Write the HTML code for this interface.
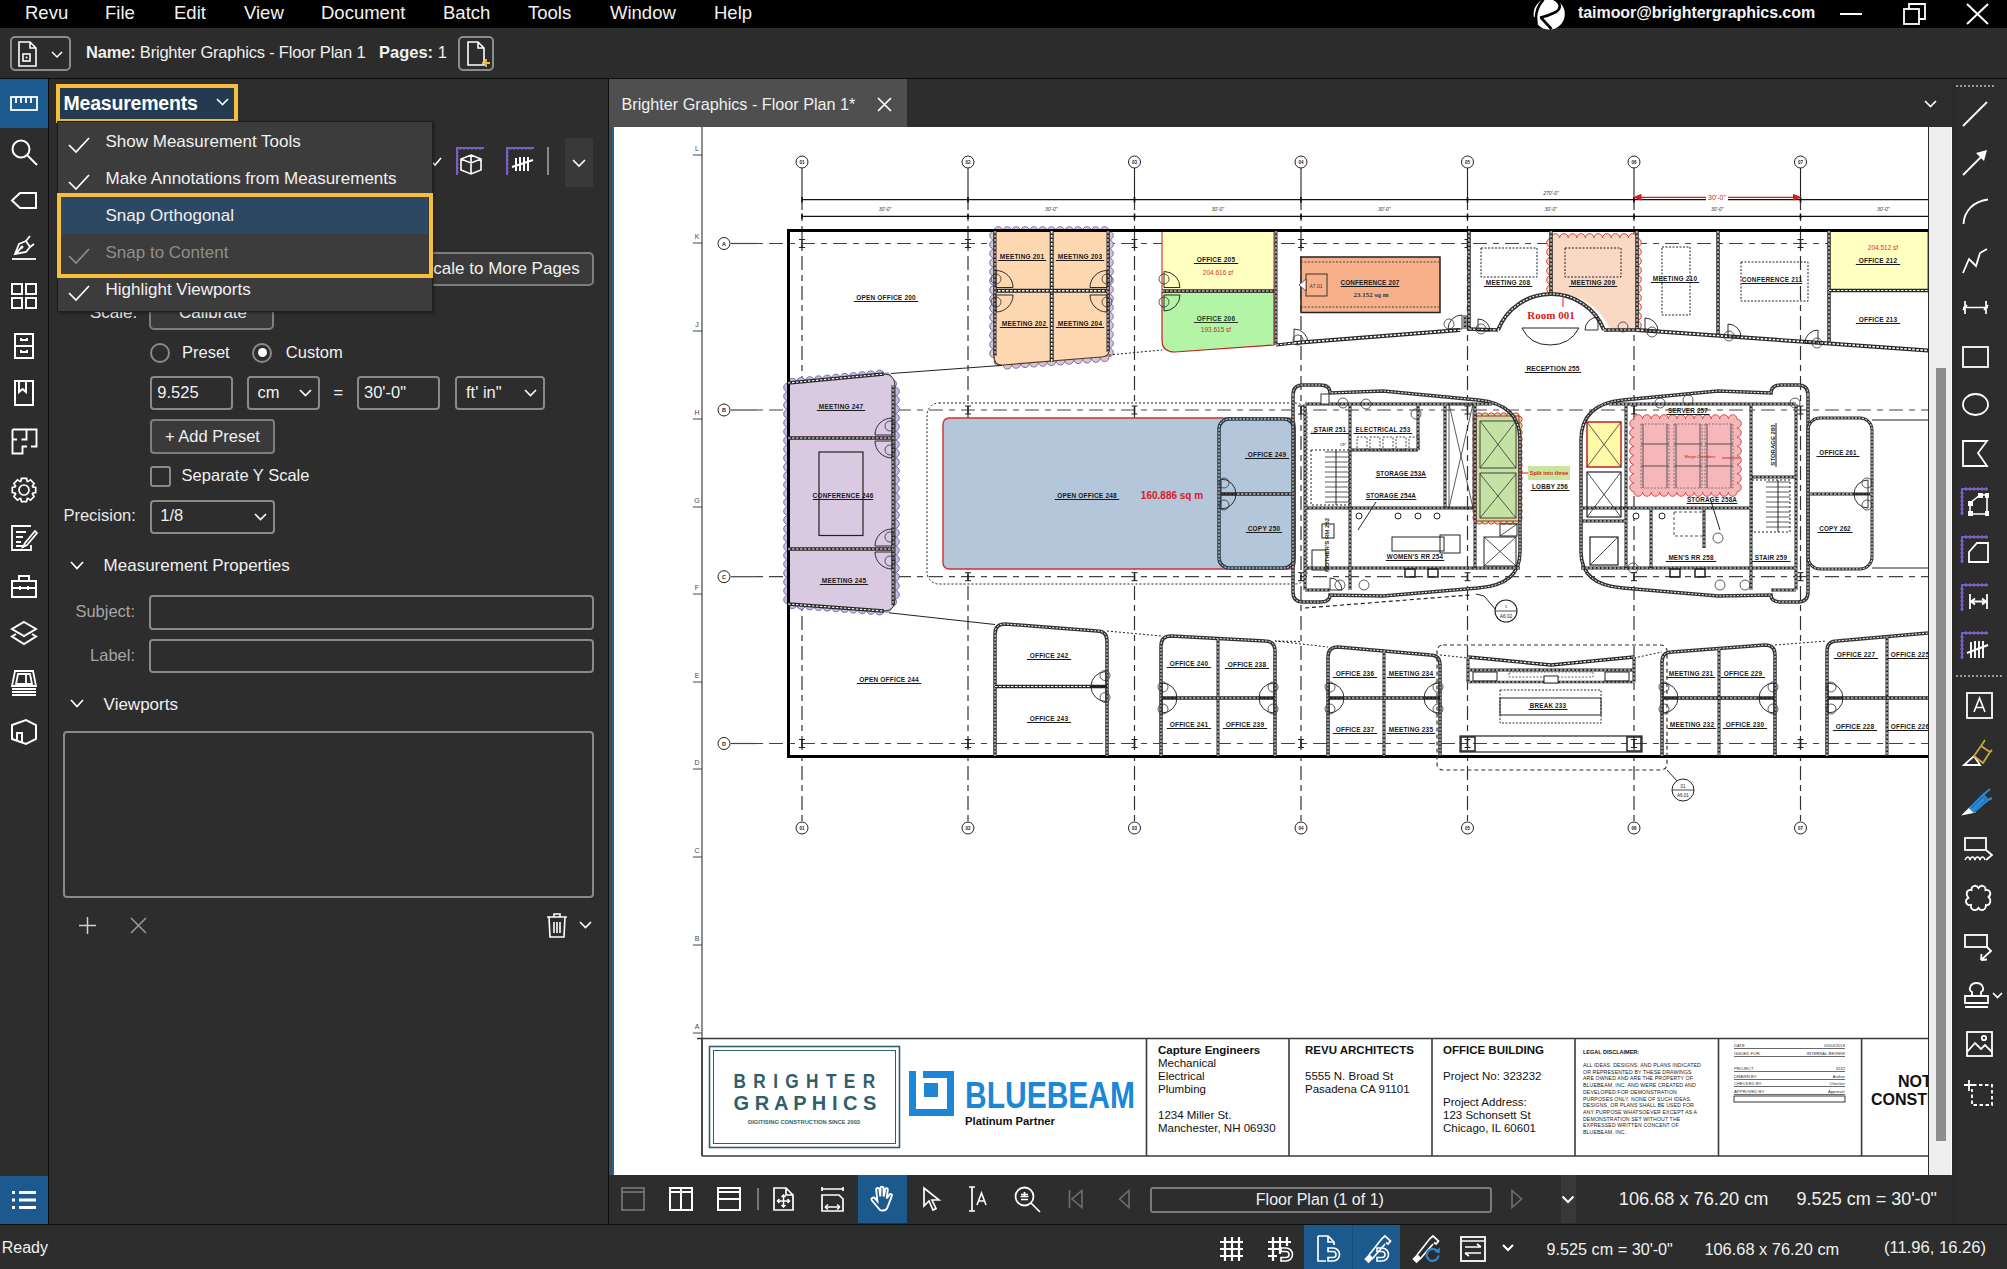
<!DOCTYPE html>
<html><head><meta charset="utf-8">
<style>
*{margin:0;padding:0;box-sizing:border-box}
html,body{width:2007px;height:1269px;overflow:hidden;background:#2d2d2d;font-family:"Liberation Sans",sans-serif;color:#fff}
.a{position:absolute}
#menubar{left:0;top:0;width:2007px;height:28px;background:#000}
.mi{position:absolute;top:4.3px;font-size:18.5px;line-height:1;color:#f2f2f2;white-space:nowrap}
#toolbar{left:0;top:28px;width:2007px;height:50px;background:#2c2c2c}
.hl{position:absolute;background:#0d0d0d}
#lsb{left:0;top:79px;width:48px;height:1145px;background:#2d2d2d}
#panel{left:49px;top:79px;width:559px;height:1145px;background:#2d2d2d}
#doc{left:609px;top:79px;width:1343px;height:1145px;background:#2d2d2d}
#rsb{left:1952px;top:79px;width:55px;height:1145px;background:#2d2d2d}
#status{left:0;top:1225px;width:2007px;height:44px;background:#2d2d2d}
.txt{position:absolute;white-space:nowrap;line-height:1}
.box{position:absolute;border:2px solid #8a8a8a;border-radius:4px}
svg{position:absolute;overflow:visible}
</style></head><body>
<div id="menubar" class="a">
 <span class="mi" style="left:25px">Revu</span>
 <span class="mi" style="left:105px">File</span>
 <span class="mi" style="left:174px">Edit</span>
 <span class="mi" style="left:244px">View</span>
 <span class="mi" style="left:321px">Document</span>
 <span class="mi" style="left:443px">Batch</span>
 <span class="mi" style="left:528px">Tools</span>
 <span class="mi" style="left:610px">Window</span>
 <span class="mi" style="left:714px">Help</span>
</div>
<div id="toolbar" class="a">
 <div class="box" style="left:10px;top:8px;width:61px;height:35px;border-color:#8c8c8c;border-radius:5px"></div>
 <svg style="left:17px;top:12px" width="24" height="28" viewBox="0 0 24 28" fill="none" stroke="#fff" stroke-width="1.6"><path d="M2 2H13L19 8V26H2Z M13 2V8H19"/><rect x="6" y="14" width="7" height="7"/><rect x="8.6" y="16.6" width="1.8" height="1.8" fill="#fff" stroke="none"/></svg>
 <svg style="left:51px;top:23px" width="12" height="7" viewBox="0 0 12 7" fill="none" stroke="#fff" stroke-width="1.5"><path d="M1 1L6 6L11 1"/></svg>
 <span class="txt" style="left:86px;top:16px;font-size:16.5px;color:#f0f0f0;letter-spacing:-0.2px"><b>Name:</b> Brighter Graphics - Floor Plan 1</span>
 <span class="txt" style="left:379px;top:16px;font-size:16.5px;color:#f0f0f0"><b>Pages:</b> 1</span>
 <div class="box" style="left:458px;top:8px;width:36px;height:35px;border-color:#8c8c8c;border-radius:5px"></div>
 <svg style="left:466px;top:12px" width="24" height="28" viewBox="0 0 24 28" fill="none" stroke="#fff" stroke-width="1.6"><path d="M2 2H12L18 8V25H2Z M12 2V8H18"/><path d="M20 19V27M16 23H24" stroke="#e8c040" stroke-width="1.8"/></svg>
</div>
<div class="hl" style="left:0;top:78px;width:2007px;height:1px"></div>
<div id="lsb" class="a">
 <div class="a" style="left:0;top:0;width:48px;height:49px;background:#1c5a8d"></div>
 <svg style="left:10px;top:17px" width="28" height="15" viewBox="0 0 28 15" fill="none" stroke="#fff" stroke-width="1.8"><rect x="1" y="1" width="26" height="13"/><path d="M6 1V7M11 1V7M16 1V7M21 1V7"/></svg>
 <svg style="left:11px;top:60px" width="27" height="27" viewBox="0 0 27 27" fill="none" stroke="#fff" stroke-width="2"><circle cx="10" cy="10" r="8.5"/><path d="M16 16L26 26"/></svg>
 <svg style="left:11px;top:113px" width="26" height="17" viewBox="0 0 26 17" fill="none" stroke="#fff" stroke-width="2"><path d="M25 1H9L1 8.5L9 16H25Z"/></svg>
 <svg style="left:11px;top:156px" width="26" height="26" viewBox="0 0 26 26" fill="none" stroke="#fff" stroke-width="1.8"><path d="M1 24H25"/><path d="M4 19L8 9L15 6L19 12L15 17Z M4 19L11 12"/><path d="M15 6L19 1M19 12L23 9"/><circle cx="11" cy="12" r="0.6" fill="#fff"/></svg>
 <svg style="left:11px;top:204px" width="26" height="26" viewBox="0 0 26 26" fill="none" stroke="#fff" stroke-width="2"><rect x="1" y="1" width="10" height="10"/><rect x="15" y="1" width="10" height="10"/><rect x="1" y="15" width="10" height="10"/><rect x="15" y="15" width="10" height="10"/></svg>
 <svg style="left:14px;top:254px" width="20" height="26" viewBox="0 0 20 26" fill="none" stroke="#fff" stroke-width="2"><rect x="1" y="1" width="18" height="24"/><path d="M1 13H19M7 5V7H13V5M7 17V19H13V17"/></svg>
 <svg style="left:14px;top:301px" width="20" height="26" viewBox="0 0 20 26" fill="none" stroke="#fff" stroke-width="2"><rect x="1" y="1" width="18" height="24"/><path d="M5 1V12L8.5 9L12 12V1"/></svg>
 <svg style="left:11px;top:349px" width="27" height="27" viewBox="0 0 27 27" fill="none" stroke="#fff" stroke-width="1.9"><path d="M1.5 1.5H25.5V18.5H20 M1.5 1.5V25.5H11.5V18.5H16 M15.5 1.5V11.5H10.5 M1.5 11.5H6"/></svg>
 <svg style="left:11px;top:398px" width="26" height="26" viewBox="0 0 26 26" fill="none" stroke="#fff" stroke-width="1.7"><path d="M21.7 9.8 L24.7 10.5 L24.7 15.5 L21.7 16.2 L21.4 16.9 L23.1 19.5 L19.5 23.1 L16.9 21.4 L16.2 21.7 L15.5 24.7 L10.5 24.7 L9.8 21.7 L9.1 21.4 L6.5 23.1 L2.9 19.5 L4.6 16.9 L4.3 16.2 L1.3 15.5 L1.3 10.5 L4.3 9.8 L4.6 9.1 L2.9 6.5 L6.5 2.9 L9.1 4.6 L9.8 4.3 L10.5 1.3 L15.5 1.3 L16.2 4.3 L16.9 4.6 L19.5 2.9 L23.1 6.5 L21.4 9.1Z"/><circle cx="13" cy="13" r="5"/></svg>
 <svg style="left:11px;top:446px" width="26" height="26" viewBox="0 0 26 26" fill="none" stroke="#fff" stroke-width="1.8"><path d="M20 1H1V25H20V20"/><path d="M5 7H15M5 12H12M5 17H10M5 21H14"/><path d="M24 6L14 18L12 22L16 20L26 8Z"/></svg>
 <svg style="left:11px;top:495px" width="26" height="24" viewBox="0 0 26 24" fill="none" stroke="#fff" stroke-width="2"><rect x="1" y="7" width="24" height="16"/><path d="M8 7V2H18V7M1 14H25M9 12V16M17 12V16"/></svg>
 <svg style="left:11px;top:542px" width="26" height="26" viewBox="0 0 26 26" fill="none" stroke="#fff" stroke-width="2"><path d="M13 1L25 8L13 15L1 8Z"/><path d="M5 13L1 15.5L13 23L25 15.5L21 13"/></svg>
 <svg style="left:11px;top:591px" width="26" height="26" viewBox="0 0 26 26" fill="none" stroke="#fff" stroke-width="1.8"><path d="M4 1H22L25 16H1Z M7 4H19L21 14H5Z M15 4V14"/><path d="M1 19H25M1 22H25M1 25H25"/></svg>
 <svg style="left:11px;top:640px" width="26" height="26" viewBox="0 0 26 26" fill="none" stroke="#fff" stroke-width="2"><path d="M1 6L15 1L25 6V20L15 25L1 20Z"/><path d="M6 21V14H11V23"/></svg>
 <div class="a" style="left:0;top:1097px;width:48px;height:48px;background:#1c5a8d"></div>
 <svg style="left:12px;top:1112px" width="24" height="18" viewBox="0 0 24 18" fill="#fff"><rect x="0" y="0" width="3" height="3"/><rect x="0" y="7.5" width="3" height="3"/><rect x="0" y="15" width="3" height="3"/><rect x="7" y="0" width="17" height="3"/><rect x="7" y="7.5" width="17" height="3"/><rect x="7" y="15" width="17" height="3"/></svg>
</div>
<div class="hl" style="left:48px;top:79px;width:1px;height:1145px"></div>
<div id="panel" class="a"></div>
<!-- panel content (page coords) -->
<div id="pc">
 <!-- hidden toolbar row behind menu -->
 <svg style="left:432px;top:156px" width="10" height="10" viewBox="0 0 10 10" fill="none" stroke="#fff" stroke-width="1.6"><path d="M0 6L3 9L9 2"/></svg>
 <svg style="left:455px;top:146px" width="30" height="30" viewBox="0 0 30 30" fill="none"><path d="M2 29V2H29" stroke="#7b5fc4" stroke-width="2"/><path d="M5 1V4M9 1V4M13 1V4M17 1V4M21 1V4M25 1V4M1 6H4M1 10H4M1 14H4M1 18H4M1 22H4M1 26H4" stroke="#7b5fc4" stroke-width="1.2"/><path d="M16 9L26 13V24L16 28L6 24V13Z M6 13L16 17L26 13 M16 17V28 M16 9V17" stroke="#fff" stroke-width="1.6"/></svg>
 <svg style="left:505px;top:146px" width="30" height="30" viewBox="0 0 30 30" fill="none"><path d="M2 29V2H29" stroke="#7b5fc4" stroke-width="2"/><path d="M5 1V4M9 1V4M13 1V4M17 1V4M21 1V4M25 1V4M1 6H4M1 10H4M1 14H4M1 18H4M1 22H4M1 26H4" stroke="#7b5fc4" stroke-width="1.2"/><path d="M11 12V25M15 11V25M19 11V25M23 11V25M7 21L28 14" stroke="#fff" stroke-width="2"/></svg>
 <div class="a" style="left:547px;top:147px;width:2px;height:28px;background:#8a8a8a"></div>
 <div class="a" style="left:565px;top:138px;width:28px;height:49px;background:#393939"></div>
 <svg style="left:572px;top:159px" width="14" height="8" viewBox="0 0 14 8" fill="none" stroke="#fff" stroke-width="1.6"><path d="M1 1L7 7L13 1"/></svg>
 <div class="box" style="left:300px;top:252px;width:294px;height:34px;background:#3a3a3a;border-color:#7e7e7e;border-radius:5px"></div>
 <span class="txt" style="left:422px;top:259.6px;font-size:17px;color:#f0f0f0">Scale to More Pages</span>
 <span class="txt" style="left:90px;top:304.2px;font-size:17px;color:#e8e8e8">Scale:</span>
 <div class="box" style="left:149px;top:290px;width:125px;height:40px;background:#3a3a3a;border-color:#7e7e7e;border-radius:5px"></div>
 <span class="txt" style="left:179px;top:304.2px;font-size:17px;color:#f0f0f0">Calibrate</span>
 <!-- radios -->
 <div class="a" style="left:149.5px;top:342.8px;width:20px;height:20px;border:2px solid #8a8a8a;border-radius:50%"></div>
 <span class="txt" style="left:182px;top:344px;font-size:16.5px;color:#f0f0f0">Preset</span>
 <div class="a" style="left:252.3px;top:342.8px;width:20px;height:20px;border:2px solid #8a8a8a;border-radius:50%"></div>
 <div class="a" style="left:257.8px;top:348.3px;width:9px;height:9px;background:#fff;border-radius:50%"></div>
 <span class="txt" style="left:285.8px;top:344px;font-size:16.5px;color:#f0f0f0">Custom</span>
 <!-- inputs -->
 <div class="box" style="left:149.5px;top:376px;width:83px;height:34px"></div>
 <span class="txt" style="left:157.3px;top:384px;font-size:16.5px;color:#f0f0f0">9.525</span>
 <div class="box" style="left:246.6px;top:376px;width:73px;height:34px"></div>
 <span class="txt" style="left:257.6px;top:384px;font-size:16.5px;color:#f0f0f0">cm</span>
 <svg style="left:299px;top:389px" width="13" height="8" viewBox="0 0 13 8" fill="none" stroke="#fff" stroke-width="1.6"><path d="M1 1L6.5 6.5L12 1"/></svg>
 <span class="txt" style="left:333.6px;top:384px;font-size:16.5px;color:#f0f0f0">=</span>
 <div class="box" style="left:357px;top:376px;width:83px;height:34px"></div>
 <span class="txt" style="left:364px;top:384px;font-size:16.5px;color:#f0f0f0">30'-0"</span>
 <div class="box" style="left:455px;top:376px;width:90px;height:34px"></div>
 <span class="txt" style="left:466px;top:384px;font-size:16.5px;color:#f0f0f0">ft' in"</span>
 <svg style="left:524px;top:389px" width="13" height="8" viewBox="0 0 13 8" fill="none" stroke="#fff" stroke-width="1.6"><path d="M1 1L6.5 6.5L12 1"/></svg>
 <div class="box" style="left:149.5px;top:419px;width:125px;height:35px;background:#3a3a3a;border-color:#7e7e7e"></div>
 <span class="txt" style="left:165px;top:427.7px;font-size:16.5px;color:#f0f0f0">+ Add Preset</span>
 <div class="a" style="left:149.5px;top:466.3px;width:21px;height:21px;border:2px solid #8a8a8a;border-radius:3px"></div>
 <span class="txt" style="left:181.6px;top:467px;font-size:16.5px;color:#f0f0f0">Separate Y Scale</span>
 <span class="txt" style="left:63.4px;top:507.4px;font-size:16.5px;color:#e8e8e8">Precision:</span>
 <div class="box" style="left:149.5px;top:500px;width:125px;height:34px"></div>
 <span class="txt" style="left:160.3px;top:507.4px;font-size:16.5px;color:#f0f0f0">1/8</span>
 <svg style="left:254px;top:513px" width="13" height="8" viewBox="0 0 13 8" fill="none" stroke="#fff" stroke-width="1.6"><path d="M1 1L6.5 6.5L12 1"/></svg>
 <svg style="left:70px;top:561px" width="14" height="9" viewBox="0 0 14 9" fill="none" stroke="#fff" stroke-width="1.7"><path d="M1 1L7 7.5L13 1"/></svg>
 <span class="txt" style="left:103.6px;top:557.1px;font-size:17px;color:#f0f0f0">Measurement Properties</span>
 <span class="txt" style="left:75px;top:603px;font-size:16.5px;color:#a5a5a5;width:60px;text-align:right">Subject:</span>
 <div class="box" style="left:149.3px;top:595px;width:445px;height:35px"></div>
 <span class="txt" style="left:75px;top:646.5px;font-size:16.5px;color:#a5a5a5;width:60px;text-align:right">Label:</span>
 <div class="box" style="left:149.3px;top:638.5px;width:445px;height:34px"></div>
 <svg style="left:70px;top:699px" width="14" height="9" viewBox="0 0 14 9" fill="none" stroke="#fff" stroke-width="1.7"><path d="M1 1L7 7.5L13 1"/></svg>
 <span class="txt" style="left:103.6px;top:695.6px;font-size:17px;color:#f0f0f0">Viewports</span>
 <div class="box" style="left:63.4px;top:730.6px;width:531px;height:167px"></div>
 <svg style="left:79px;top:917px" width="17" height="17" viewBox="0 0 17 17" fill="none" stroke="#d0d0d0" stroke-width="1.5"><path d="M8.5 0V17M0 8.5H17"/></svg>
 <svg style="left:130px;top:917px" width="17" height="17" viewBox="0 0 17 17" fill="none" stroke="#9a9a9a" stroke-width="1.5"><path d="M1 1L16 16M16 1L1 16"/></svg>
 <svg style="left:546px;top:912px" width="22" height="26" viewBox="0 0 22 26" fill="none" stroke="#fff" stroke-width="1.6"><path d="M1 5H21M8 5V2H14V5M3 5L4 25H18L19 5M8 10V21M11 10V21M14 10V21"/></svg>
 <svg style="left:579px;top:921px" width="13" height="8" viewBox="0 0 13 8" fill="none" stroke="#fff" stroke-width="1.6"><path d="M1 1L6.5 6.5L12 1"/></svg>
</div>
<!-- measurements header + dropdown menu -->
<div class="a" style="left:56px;top:84px;width:182px;height:39px;border:4px solid #f5bf3c;background:#243a50"></div>
<span class="txt" style="left:63.5px;top:93.5px;font-size:19.5px;font-weight:bold;color:#fff;letter-spacing:-0.2px">Measurements</span>
<svg style="left:216px;top:98px" width="13" height="8" viewBox="0 0 13 8" fill="none" stroke="#fff" stroke-width="1.6"><path d="M1 1L6.5 6.5L12 1"/></svg>
<div class="a" style="left:57px;top:121px;width:376px;height:191px;background:#3c3c3c;border:1px solid #1e1e1e;box-shadow:1px 1px 3px rgba(0,0,0,.4)"></div>
<div class="a" style="left:61px;top:197px;width:367px;height:37px;background:#2d4862"></div>
<div class="a" style="left:57px;top:193px;width:376px;height:85px;border:4px solid #f5bf3c"></div>
<svg style="left:68px;top:137px" width="22" height="16" viewBox="0 0 22 16" fill="none" stroke="#fff" stroke-width="1.7"><path d="M1 8L8 15L21 1"/></svg>
<span class="txt" style="left:105.5px;top:132.8px;font-size:17px;color:#f0f0f0">Show Measurement Tools</span>
<svg style="left:68px;top:174px" width="22" height="16" viewBox="0 0 22 16" fill="none" stroke="#fff" stroke-width="1.7"><path d="M1 8L8 15L21 1"/></svg>
<span class="txt" style="left:105.5px;top:170.2px;font-size:17px;color:#f0f0f0">Make Annotations from Measurements</span>
<span class="txt" style="left:105.5px;top:207.1px;font-size:17px;color:#f0f0f0">Snap Orthogonal</span>
<svg style="left:68px;top:248px" width="22" height="16" viewBox="0 0 22 16" fill="none" stroke="#8c8c8c" stroke-width="1.7"><path d="M1 8L8 15L21 1"/></svg>
<span class="txt" style="left:105.5px;top:244px;font-size:17px;color:#8e8e8e">Snap to Content</span>
<svg style="left:68px;top:285px" width="22" height="16" viewBox="0 0 22 16" fill="none" stroke="#fff" stroke-width="1.7"><path d="M1 8L8 15L21 1"/></svg>
<span class="txt" style="left:105.5px;top:280.8px;font-size:17px;color:#f0f0f0">Highlight Viewports</span>
<div class="hl" style="left:608px;top:79px;width:1px;height:1145px"></div>
<div id="doc" class="a"></div>
<div class="a" style="left:609px;top:79px;width:298px;height:48px;background:#4f4f4f"></div>
<span class="txt" style="left:621.5px;top:96.3px;font-size:16.2px;color:#f0f0f0">Brighter Graphics - Floor Plan 1*</span>
<svg style="left:877px;top:96.5px" width="15" height="15" viewBox="0 0 15 15" fill="none" stroke="#fff" stroke-width="1.7"><path d="M1 1L14 14M14 1L1 14"/></svg>
<svg style="left:1924px;top:100px" width="13" height="8" viewBox="0 0 13 8" fill="none" stroke="#fff" stroke-width="1.6"><path d="M1 1L6.5 6.5L12 1"/></svg>
<div class="a" style="left:609px;top:127px;width:3px;height:1048px;background:#4a4a4a"></div>
<div class="a" style="left:611.5px;top:127px;width:3px;height:1048px;background:#22628f"></div>
<div class="a" style="left:614px;top:127px;width:1314px;height:1048px;background:#fff;overflow:hidden">
<svg style="left:0;top:0" width="1314" height="1048" viewBox="614 127 1314 1048" font-family="Liberation Sans">
<line x1="702" y1="127" x2="702" y2="1156" stroke="#444" stroke-width="1.2"/>
<text x="697" y="151" font-size="7" fill="#444" text-anchor="middle" font-weight="normal" font-family="Liberation Sans">L</text>
<line x1="693" y1="155" x2="702" y2="155" stroke="#444" stroke-width="1"/>
<text x="697" y="239" font-size="7" fill="#444" text-anchor="middle" font-weight="normal" font-family="Liberation Sans">K</text>
<line x1="693" y1="243" x2="702" y2="243" stroke="#444" stroke-width="1"/>
<text x="697" y="327" font-size="7" fill="#444" text-anchor="middle" font-weight="normal" font-family="Liberation Sans">J</text>
<line x1="693" y1="331" x2="702" y2="331" stroke="#444" stroke-width="1"/>
<text x="697" y="415" font-size="7" fill="#444" text-anchor="middle" font-weight="normal" font-family="Liberation Sans">H</text>
<line x1="693" y1="419" x2="702" y2="419" stroke="#444" stroke-width="1"/>
<text x="697" y="503" font-size="7" fill="#444" text-anchor="middle" font-weight="normal" font-family="Liberation Sans">G</text>
<line x1="693" y1="507" x2="702" y2="507" stroke="#444" stroke-width="1"/>
<text x="697" y="590" font-size="7" fill="#444" text-anchor="middle" font-weight="normal" font-family="Liberation Sans">F</text>
<line x1="693" y1="594" x2="702" y2="594" stroke="#444" stroke-width="1"/>
<text x="697" y="678" font-size="7" fill="#444" text-anchor="middle" font-weight="normal" font-family="Liberation Sans">E</text>
<line x1="693" y1="682" x2="702" y2="682" stroke="#444" stroke-width="1"/>
<text x="697" y="765" font-size="7" fill="#444" text-anchor="middle" font-weight="normal" font-family="Liberation Sans">D</text>
<line x1="693" y1="769" x2="702" y2="769" stroke="#444" stroke-width="1"/>
<text x="697" y="853" font-size="7" fill="#444" text-anchor="middle" font-weight="normal" font-family="Liberation Sans">C</text>
<line x1="693" y1="857" x2="702" y2="857" stroke="#444" stroke-width="1"/>
<text x="697" y="941" font-size="7" fill="#444" text-anchor="middle" font-weight="normal" font-family="Liberation Sans">B</text>
<line x1="693" y1="945" x2="702" y2="945" stroke="#444" stroke-width="1"/>
<text x="697" y="1029" font-size="7" fill="#444" text-anchor="middle" font-weight="normal" font-family="Liberation Sans">A</text>
<line x1="693" y1="1033" x2="702" y2="1033" stroke="#444" stroke-width="1"/>
<line x1="802" y1="168" x2="802" y2="196" stroke="#222" stroke-width="1.1"/>
<line x1="802" y1="196" x2="802" y2="822" stroke="#333" stroke-width="1.2" stroke-dasharray="14 5 6 5"/>
<circle cx="802" cy="162" r="6" fill="#fff" stroke="#222" stroke-width="1"/>
<circle cx="802" cy="828" r="6" fill="#fff" stroke="#222" stroke-width="1"/>
<line x1="968" y1="168" x2="968" y2="196" stroke="#222" stroke-width="1.1"/>
<line x1="968" y1="196" x2="968" y2="822" stroke="#333" stroke-width="1.2" stroke-dasharray="14 5 6 5"/>
<circle cx="968" cy="162" r="6" fill="#fff" stroke="#222" stroke-width="1"/>
<circle cx="968" cy="828" r="6" fill="#fff" stroke="#222" stroke-width="1"/>
<line x1="1134.5" y1="168" x2="1134.5" y2="196" stroke="#222" stroke-width="1.1"/>
<line x1="1134.5" y1="196" x2="1134.5" y2="822" stroke="#333" stroke-width="1.2" stroke-dasharray="14 5 6 5"/>
<circle cx="1134.5" cy="162" r="6" fill="#fff" stroke="#222" stroke-width="1"/>
<circle cx="1134.5" cy="828" r="6" fill="#fff" stroke="#222" stroke-width="1"/>
<line x1="1301" y1="168" x2="1301" y2="196" stroke="#222" stroke-width="1.1"/>
<line x1="1301" y1="196" x2="1301" y2="822" stroke="#333" stroke-width="1.2" stroke-dasharray="14 5 6 5"/>
<circle cx="1301" cy="162" r="6" fill="#fff" stroke="#222" stroke-width="1"/>
<circle cx="1301" cy="828" r="6" fill="#fff" stroke="#222" stroke-width="1"/>
<line x1="1467.5" y1="168" x2="1467.5" y2="196" stroke="#222" stroke-width="1.1"/>
<line x1="1467.5" y1="196" x2="1467.5" y2="822" stroke="#333" stroke-width="1.2" stroke-dasharray="14 5 6 5"/>
<circle cx="1467.5" cy="162" r="6" fill="#fff" stroke="#222" stroke-width="1"/>
<circle cx="1467.5" cy="828" r="6" fill="#fff" stroke="#222" stroke-width="1"/>
<line x1="1634" y1="168" x2="1634" y2="196" stroke="#222" stroke-width="1.1"/>
<line x1="1634" y1="196" x2="1634" y2="822" stroke="#333" stroke-width="1.2" stroke-dasharray="14 5 6 5"/>
<circle cx="1634" cy="162" r="6" fill="#fff" stroke="#222" stroke-width="1"/>
<circle cx="1634" cy="828" r="6" fill="#fff" stroke="#222" stroke-width="1"/>
<line x1="1800.5" y1="168" x2="1800.5" y2="196" stroke="#222" stroke-width="1.1"/>
<line x1="1800.5" y1="196" x2="1800.5" y2="822" stroke="#333" stroke-width="1.2" stroke-dasharray="14 5 6 5"/>
<circle cx="1800.5" cy="162" r="6" fill="#fff" stroke="#222" stroke-width="1"/>
<circle cx="1800.5" cy="828" r="6" fill="#fff" stroke="#222" stroke-width="1"/>
<text x="802" y="164" font-size="4.5" fill="#222" text-anchor="middle" font-weight="bold" font-family="Liberation Sans">01</text>
<text x="802" y="830" font-size="4.5" fill="#222" text-anchor="middle" font-weight="bold" font-family="Liberation Sans">01</text>
<text x="968" y="164" font-size="4.5" fill="#222" text-anchor="middle" font-weight="bold" font-family="Liberation Sans">02</text>
<text x="968" y="830" font-size="4.5" fill="#222" text-anchor="middle" font-weight="bold" font-family="Liberation Sans">02</text>
<text x="1134.5" y="164" font-size="4.5" fill="#222" text-anchor="middle" font-weight="bold" font-family="Liberation Sans">03</text>
<text x="1134.5" y="830" font-size="4.5" fill="#222" text-anchor="middle" font-weight="bold" font-family="Liberation Sans">03</text>
<text x="1301" y="164" font-size="4.5" fill="#222" text-anchor="middle" font-weight="bold" font-family="Liberation Sans">04</text>
<text x="1301" y="830" font-size="4.5" fill="#222" text-anchor="middle" font-weight="bold" font-family="Liberation Sans">04</text>
<text x="1467.5" y="164" font-size="4.5" fill="#222" text-anchor="middle" font-weight="bold" font-family="Liberation Sans">05</text>
<text x="1467.5" y="830" font-size="4.5" fill="#222" text-anchor="middle" font-weight="bold" font-family="Liberation Sans">05</text>
<text x="1634" y="164" font-size="4.5" fill="#222" text-anchor="middle" font-weight="bold" font-family="Liberation Sans">06</text>
<text x="1634" y="830" font-size="4.5" fill="#222" text-anchor="middle" font-weight="bold" font-family="Liberation Sans">06</text>
<text x="1800.5" y="164" font-size="4.5" fill="#222" text-anchor="middle" font-weight="bold" font-family="Liberation Sans">07</text>
<text x="1800.5" y="830" font-size="4.5" fill="#222" text-anchor="middle" font-weight="bold" font-family="Liberation Sans">07</text>
<line x1="731" y1="243.5" x2="757" y2="243.5" stroke="#444" stroke-width="1.2"/>
<line x1="757" y1="243.5" x2="1928" y2="243.5" stroke="#444" stroke-width="1.2" stroke-dasharray="6 6 14 6"/>
<circle cx="724" cy="243.5" r="6" fill="#fff" stroke="#222" stroke-width="1"/>
<text x="724" y="245.5" font-size="5.5" fill="#222" text-anchor="middle" font-weight="bold" font-family="Liberation Sans">A</text>
<line x1="799" y1="239.5" x2="805" y2="239.5" stroke="#222" stroke-width="1"/>
<line x1="799" y1="247.5" x2="805" y2="247.5" stroke="#222" stroke-width="1"/>
<line x1="802" y1="239.5" x2="802" y2="247.5" stroke="#222" stroke-width="1.5"/>
<line x1="965" y1="239.5" x2="971" y2="239.5" stroke="#222" stroke-width="1"/>
<line x1="965" y1="247.5" x2="971" y2="247.5" stroke="#222" stroke-width="1"/>
<line x1="968" y1="239.5" x2="968" y2="247.5" stroke="#222" stroke-width="1.5"/>
<line x1="1131.5" y1="239.5" x2="1137.5" y2="239.5" stroke="#222" stroke-width="1"/>
<line x1="1131.5" y1="247.5" x2="1137.5" y2="247.5" stroke="#222" stroke-width="1"/>
<line x1="1134.5" y1="239.5" x2="1134.5" y2="247.5" stroke="#222" stroke-width="1.5"/>
<line x1="1298" y1="239.5" x2="1304" y2="239.5" stroke="#222" stroke-width="1"/>
<line x1="1298" y1="247.5" x2="1304" y2="247.5" stroke="#222" stroke-width="1"/>
<line x1="1301" y1="239.5" x2="1301" y2="247.5" stroke="#222" stroke-width="1.5"/>
<line x1="1464.5" y1="239.5" x2="1470.5" y2="239.5" stroke="#222" stroke-width="1"/>
<line x1="1464.5" y1="247.5" x2="1470.5" y2="247.5" stroke="#222" stroke-width="1"/>
<line x1="1467.5" y1="239.5" x2="1467.5" y2="247.5" stroke="#222" stroke-width="1.5"/>
<line x1="1631" y1="239.5" x2="1637" y2="239.5" stroke="#222" stroke-width="1"/>
<line x1="1631" y1="247.5" x2="1637" y2="247.5" stroke="#222" stroke-width="1"/>
<line x1="1634" y1="239.5" x2="1634" y2="247.5" stroke="#222" stroke-width="1.5"/>
<line x1="1797.5" y1="239.5" x2="1803.5" y2="239.5" stroke="#222" stroke-width="1"/>
<line x1="1797.5" y1="247.5" x2="1803.5" y2="247.5" stroke="#222" stroke-width="1"/>
<line x1="1800.5" y1="239.5" x2="1800.5" y2="247.5" stroke="#222" stroke-width="1.5"/>
<line x1="731" y1="410" x2="757" y2="410" stroke="#444" stroke-width="1.2"/>
<line x1="757" y1="410" x2="1928" y2="410" stroke="#444" stroke-width="1.2" stroke-dasharray="6 6 14 6"/>
<circle cx="724" cy="410" r="6" fill="#fff" stroke="#222" stroke-width="1"/>
<text x="724" y="412" font-size="5.5" fill="#222" text-anchor="middle" font-weight="bold" font-family="Liberation Sans">B</text>
<line x1="799" y1="406" x2="805" y2="406" stroke="#222" stroke-width="1"/>
<line x1="799" y1="414" x2="805" y2="414" stroke="#222" stroke-width="1"/>
<line x1="802" y1="406" x2="802" y2="414" stroke="#222" stroke-width="1.5"/>
<line x1="965" y1="406" x2="971" y2="406" stroke="#222" stroke-width="1"/>
<line x1="965" y1="414" x2="971" y2="414" stroke="#222" stroke-width="1"/>
<line x1="968" y1="406" x2="968" y2="414" stroke="#222" stroke-width="1.5"/>
<line x1="1131.5" y1="406" x2="1137.5" y2="406" stroke="#222" stroke-width="1"/>
<line x1="1131.5" y1="414" x2="1137.5" y2="414" stroke="#222" stroke-width="1"/>
<line x1="1134.5" y1="406" x2="1134.5" y2="414" stroke="#222" stroke-width="1.5"/>
<line x1="1298" y1="406" x2="1304" y2="406" stroke="#222" stroke-width="1"/>
<line x1="1298" y1="414" x2="1304" y2="414" stroke="#222" stroke-width="1"/>
<line x1="1301" y1="406" x2="1301" y2="414" stroke="#222" stroke-width="1.5"/>
<line x1="1464.5" y1="406" x2="1470.5" y2="406" stroke="#222" stroke-width="1"/>
<line x1="1464.5" y1="414" x2="1470.5" y2="414" stroke="#222" stroke-width="1"/>
<line x1="1467.5" y1="406" x2="1467.5" y2="414" stroke="#222" stroke-width="1.5"/>
<line x1="1631" y1="406" x2="1637" y2="406" stroke="#222" stroke-width="1"/>
<line x1="1631" y1="414" x2="1637" y2="414" stroke="#222" stroke-width="1"/>
<line x1="1634" y1="406" x2="1634" y2="414" stroke="#222" stroke-width="1.5"/>
<line x1="1797.5" y1="406" x2="1803.5" y2="406" stroke="#222" stroke-width="1"/>
<line x1="1797.5" y1="414" x2="1803.5" y2="414" stroke="#222" stroke-width="1"/>
<line x1="1800.5" y1="406" x2="1800.5" y2="414" stroke="#222" stroke-width="1.5"/>
<line x1="731" y1="576.7" x2="757" y2="576.7" stroke="#444" stroke-width="1.2"/>
<line x1="757" y1="576.7" x2="1928" y2="576.7" stroke="#444" stroke-width="1.2" stroke-dasharray="6 6 14 6"/>
<circle cx="724" cy="576.7" r="6" fill="#fff" stroke="#222" stroke-width="1"/>
<text x="724" y="578.7" font-size="5.5" fill="#222" text-anchor="middle" font-weight="bold" font-family="Liberation Sans">C</text>
<line x1="799" y1="572.7" x2="805" y2="572.7" stroke="#222" stroke-width="1"/>
<line x1="799" y1="580.7" x2="805" y2="580.7" stroke="#222" stroke-width="1"/>
<line x1="802" y1="572.7" x2="802" y2="580.7" stroke="#222" stroke-width="1.5"/>
<line x1="965" y1="572.7" x2="971" y2="572.7" stroke="#222" stroke-width="1"/>
<line x1="965" y1="580.7" x2="971" y2="580.7" stroke="#222" stroke-width="1"/>
<line x1="968" y1="572.7" x2="968" y2="580.7" stroke="#222" stroke-width="1.5"/>
<line x1="1131.5" y1="572.7" x2="1137.5" y2="572.7" stroke="#222" stroke-width="1"/>
<line x1="1131.5" y1="580.7" x2="1137.5" y2="580.7" stroke="#222" stroke-width="1"/>
<line x1="1134.5" y1="572.7" x2="1134.5" y2="580.7" stroke="#222" stroke-width="1.5"/>
<line x1="1298" y1="572.7" x2="1304" y2="572.7" stroke="#222" stroke-width="1"/>
<line x1="1298" y1="580.7" x2="1304" y2="580.7" stroke="#222" stroke-width="1"/>
<line x1="1301" y1="572.7" x2="1301" y2="580.7" stroke="#222" stroke-width="1.5"/>
<line x1="1464.5" y1="572.7" x2="1470.5" y2="572.7" stroke="#222" stroke-width="1"/>
<line x1="1464.5" y1="580.7" x2="1470.5" y2="580.7" stroke="#222" stroke-width="1"/>
<line x1="1467.5" y1="572.7" x2="1467.5" y2="580.7" stroke="#222" stroke-width="1.5"/>
<line x1="1631" y1="572.7" x2="1637" y2="572.7" stroke="#222" stroke-width="1"/>
<line x1="1631" y1="580.7" x2="1637" y2="580.7" stroke="#222" stroke-width="1"/>
<line x1="1634" y1="572.7" x2="1634" y2="580.7" stroke="#222" stroke-width="1.5"/>
<line x1="1797.5" y1="572.7" x2="1803.5" y2="572.7" stroke="#222" stroke-width="1"/>
<line x1="1797.5" y1="580.7" x2="1803.5" y2="580.7" stroke="#222" stroke-width="1"/>
<line x1="1800.5" y1="572.7" x2="1800.5" y2="580.7" stroke="#222" stroke-width="1.5"/>
<line x1="731" y1="743.5" x2="757" y2="743.5" stroke="#444" stroke-width="1.2"/>
<line x1="757" y1="743.5" x2="1928" y2="743.5" stroke="#444" stroke-width="1.2" stroke-dasharray="6 6 14 6"/>
<circle cx="724" cy="743.5" r="6" fill="#fff" stroke="#222" stroke-width="1"/>
<text x="724" y="745.5" font-size="5.5" fill="#222" text-anchor="middle" font-weight="bold" font-family="Liberation Sans">D</text>
<line x1="799" y1="739.5" x2="805" y2="739.5" stroke="#222" stroke-width="1"/>
<line x1="799" y1="747.5" x2="805" y2="747.5" stroke="#222" stroke-width="1"/>
<line x1="802" y1="739.5" x2="802" y2="747.5" stroke="#222" stroke-width="1.5"/>
<line x1="965" y1="739.5" x2="971" y2="739.5" stroke="#222" stroke-width="1"/>
<line x1="965" y1="747.5" x2="971" y2="747.5" stroke="#222" stroke-width="1"/>
<line x1="968" y1="739.5" x2="968" y2="747.5" stroke="#222" stroke-width="1.5"/>
<line x1="1131.5" y1="739.5" x2="1137.5" y2="739.5" stroke="#222" stroke-width="1"/>
<line x1="1131.5" y1="747.5" x2="1137.5" y2="747.5" stroke="#222" stroke-width="1"/>
<line x1="1134.5" y1="739.5" x2="1134.5" y2="747.5" stroke="#222" stroke-width="1.5"/>
<line x1="1298" y1="739.5" x2="1304" y2="739.5" stroke="#222" stroke-width="1"/>
<line x1="1298" y1="747.5" x2="1304" y2="747.5" stroke="#222" stroke-width="1"/>
<line x1="1301" y1="739.5" x2="1301" y2="747.5" stroke="#222" stroke-width="1.5"/>
<line x1="1464.5" y1="739.5" x2="1470.5" y2="739.5" stroke="#222" stroke-width="1"/>
<line x1="1464.5" y1="747.5" x2="1470.5" y2="747.5" stroke="#222" stroke-width="1"/>
<line x1="1467.5" y1="739.5" x2="1467.5" y2="747.5" stroke="#222" stroke-width="1.5"/>
<line x1="1631" y1="739.5" x2="1637" y2="739.5" stroke="#222" stroke-width="1"/>
<line x1="1631" y1="747.5" x2="1637" y2="747.5" stroke="#222" stroke-width="1"/>
<line x1="1634" y1="739.5" x2="1634" y2="747.5" stroke="#222" stroke-width="1.5"/>
<line x1="1797.5" y1="739.5" x2="1803.5" y2="739.5" stroke="#222" stroke-width="1"/>
<line x1="1797.5" y1="747.5" x2="1803.5" y2="747.5" stroke="#222" stroke-width="1"/>
<line x1="1800.5" y1="739.5" x2="1800.5" y2="747.5" stroke="#222" stroke-width="1.5"/>
<line x1="802" y1="199.7" x2="1928" y2="199.7" stroke="#111" stroke-width="1.2"/>
<line x1="802" y1="216.3" x2="1928" y2="216.3" stroke="#111" stroke-width="1.2"/>
<line x1="802" y1="213.5" x2="802" y2="219" stroke="#111" stroke-width="1.6"/>
<line x1="802" y1="197" x2="802" y2="202.5" stroke="#111" stroke-width="1.6"/>
<line x1="968" y1="213.5" x2="968" y2="219" stroke="#111" stroke-width="1.6"/>
<line x1="968" y1="197" x2="968" y2="202.5" stroke="#111" stroke-width="1.6"/>
<line x1="1134.5" y1="213.5" x2="1134.5" y2="219" stroke="#111" stroke-width="1.6"/>
<line x1="1134.5" y1="197" x2="1134.5" y2="202.5" stroke="#111" stroke-width="1.6"/>
<line x1="1301" y1="213.5" x2="1301" y2="219" stroke="#111" stroke-width="1.6"/>
<line x1="1301" y1="197" x2="1301" y2="202.5" stroke="#111" stroke-width="1.6"/>
<line x1="1467.5" y1="213.5" x2="1467.5" y2="219" stroke="#111" stroke-width="1.6"/>
<line x1="1467.5" y1="197" x2="1467.5" y2="202.5" stroke="#111" stroke-width="1.6"/>
<line x1="1634" y1="213.5" x2="1634" y2="219" stroke="#111" stroke-width="1.6"/>
<line x1="1634" y1="197" x2="1634" y2="202.5" stroke="#111" stroke-width="1.6"/>
<line x1="1800.5" y1="213.5" x2="1800.5" y2="219" stroke="#111" stroke-width="1.6"/>
<line x1="1800.5" y1="197" x2="1800.5" y2="202.5" stroke="#111" stroke-width="1.6"/>
<text x="885.0" y="211" font-size="5" fill="#333" text-anchor="middle" font-weight="normal" font-family="Liberation Sans" font-style="italic">30'-0"</text>
<text x="1051.25" y="211" font-size="5" fill="#333" text-anchor="middle" font-weight="normal" font-family="Liberation Sans" font-style="italic">30'-0"</text>
<text x="1217.75" y="211" font-size="5" fill="#333" text-anchor="middle" font-weight="normal" font-family="Liberation Sans" font-style="italic">30'-0"</text>
<text x="1384.25" y="211" font-size="5" fill="#333" text-anchor="middle" font-weight="normal" font-family="Liberation Sans" font-style="italic">30'-0"</text>
<text x="1550.75" y="211" font-size="5" fill="#333" text-anchor="middle" font-weight="normal" font-family="Liberation Sans" font-style="italic">30'-0"</text>
<text x="1717.25" y="211" font-size="5" fill="#333" text-anchor="middle" font-weight="normal" font-family="Liberation Sans" font-style="italic">30'-0"</text>
<text x="1883.25" y="211" font-size="5" fill="#333" text-anchor="middle" font-weight="normal" font-family="Liberation Sans" font-style="italic">30'-0"</text>
<text x="1551" y="195" font-size="5" fill="#333" text-anchor="middle" font-weight="normal" font-family="Liberation Sans" font-style="italic">270'-0"</text>
<line x1="1636" y1="197.3" x2="1798" y2="197.3" stroke="#e01818" stroke-width="1.3"/>
<path d="M1634,197.3 L1641,194.5 L1641,200 Z" stroke="#e01818" stroke-width="1" fill="#e01818"/>
<path d="M1800.5,197.3 L1793.5,194.5 L1793.5,200 Z" stroke="#e01818" stroke-width="1" fill="#e01818"/>
<rect x="1706" y="193" width="22" height="8" rx="0" fill="#fff"/>
<text x="1717" y="200" font-size="7" fill="#e01818" text-anchor="middle" font-weight="normal" font-family="Liberation Sans">30'-0"</text>
<circle cx="998.4" cy="231.0" r="4.3" fill="#d9c4d0" stroke="#6c63b0" stroke-width="0.9"/>
<circle cx="1007.3" cy="231.0" r="4.3" fill="#d9c4d0" stroke="#6c63b0" stroke-width="0.9"/>
<circle cx="1016.1" cy="231.0" r="4.3" fill="#d9c4d0" stroke="#6c63b0" stroke-width="0.9"/>
<circle cx="1025.0" cy="231.0" r="4.3" fill="#d9c4d0" stroke="#6c63b0" stroke-width="0.9"/>
<circle cx="1033.8" cy="231.0" r="4.3" fill="#d9c4d0" stroke="#6c63b0" stroke-width="0.9"/>
<circle cx="1042.7" cy="231.0" r="4.3" fill="#d9c4d0" stroke="#6c63b0" stroke-width="0.9"/>
<circle cx="1051.5" cy="231.0" r="4.3" fill="#d9c4d0" stroke="#6c63b0" stroke-width="0.9"/>
<circle cx="1060.3" cy="231.0" r="4.3" fill="#d9c4d0" stroke="#6c63b0" stroke-width="0.9"/>
<circle cx="1069.2" cy="231.0" r="4.3" fill="#d9c4d0" stroke="#6c63b0" stroke-width="0.9"/>
<circle cx="1078.0" cy="231.0" r="4.3" fill="#d9c4d0" stroke="#6c63b0" stroke-width="0.9"/>
<circle cx="1086.9" cy="231.0" r="4.3" fill="#d9c4d0" stroke="#6c63b0" stroke-width="0.9"/>
<circle cx="1095.7" cy="231.0" r="4.3" fill="#d9c4d0" stroke="#6c63b0" stroke-width="0.9"/>
<circle cx="1104.6" cy="231.0" r="4.3" fill="#d9c4d0" stroke="#6c63b0" stroke-width="0.9"/>
<circle cx="1109.0" cy="235.5" r="4.3" fill="#d9c4d0" stroke="#6c63b0" stroke-width="0.9"/>
<circle cx="1109.0" cy="244.5" r="4.3" fill="#d9c4d0" stroke="#6c63b0" stroke-width="0.9"/>
<circle cx="1109.0" cy="253.5" r="4.3" fill="#d9c4d0" stroke="#6c63b0" stroke-width="0.9"/>
<circle cx="1109.0" cy="262.5" r="4.3" fill="#d9c4d0" stroke="#6c63b0" stroke-width="0.9"/>
<circle cx="1109.0" cy="271.5" r="4.3" fill="#d9c4d0" stroke="#6c63b0" stroke-width="0.9"/>
<circle cx="1109.0" cy="280.5" r="4.3" fill="#d9c4d0" stroke="#6c63b0" stroke-width="0.9"/>
<circle cx="1109.0" cy="289.5" r="4.3" fill="#d9c4d0" stroke="#6c63b0" stroke-width="0.9"/>
<circle cx="1109.0" cy="298.5" r="4.3" fill="#d9c4d0" stroke="#6c63b0" stroke-width="0.9"/>
<circle cx="1109.0" cy="307.5" r="4.3" fill="#d9c4d0" stroke="#6c63b0" stroke-width="0.9"/>
<circle cx="1109.0" cy="316.5" r="4.3" fill="#d9c4d0" stroke="#6c63b0" stroke-width="0.9"/>
<circle cx="1109.0" cy="325.5" r="4.3" fill="#d9c4d0" stroke="#6c63b0" stroke-width="0.9"/>
<circle cx="1109.0" cy="334.5" r="4.3" fill="#d9c4d0" stroke="#6c63b0" stroke-width="0.9"/>
<circle cx="1109.0" cy="343.5" r="4.3" fill="#d9c4d0" stroke="#6c63b0" stroke-width="0.9"/>
<circle cx="1109.0" cy="352.5" r="4.3" fill="#d9c4d0" stroke="#6c63b0" stroke-width="0.9"/>
<circle cx="1104.6" cy="357.3" r="4.3" fill="#d9c4d0" stroke="#6c63b0" stroke-width="0.9"/>
<circle cx="1095.8" cy="358.0" r="4.3" fill="#d9c4d0" stroke="#6c63b0" stroke-width="0.9"/>
<circle cx="1086.9" cy="358.7" r="4.3" fill="#d9c4d0" stroke="#6c63b0" stroke-width="0.9"/>
<circle cx="1078.1" cy="359.3" r="4.3" fill="#d9c4d0" stroke="#6c63b0" stroke-width="0.9"/>
<circle cx="1069.2" cy="360.0" r="4.3" fill="#d9c4d0" stroke="#6c63b0" stroke-width="0.9"/>
<circle cx="1060.4" cy="360.7" r="4.3" fill="#d9c4d0" stroke="#6c63b0" stroke-width="0.9"/>
<circle cx="1051.6" cy="361.3" r="4.3" fill="#d9c4d0" stroke="#6c63b0" stroke-width="0.9"/>
<circle cx="1042.8" cy="362.0" r="4.3" fill="#d9c4d0" stroke="#6c63b0" stroke-width="0.9"/>
<circle cx="1033.9" cy="362.7" r="4.3" fill="#d9c4d0" stroke="#6c63b0" stroke-width="0.9"/>
<circle cx="1025.1" cy="363.3" r="4.3" fill="#d9c4d0" stroke="#6c63b0" stroke-width="0.9"/>
<circle cx="1016.2" cy="364.0" r="4.3" fill="#d9c4d0" stroke="#6c63b0" stroke-width="0.9"/>
<circle cx="1007.4" cy="364.7" r="4.3" fill="#d9c4d0" stroke="#6c63b0" stroke-width="0.9"/>
<circle cx="998.5" cy="361.5" r="4.3" fill="#d9c4d0" stroke="#6c63b0" stroke-width="0.9"/>
<circle cx="994.0" cy="353.5" r="4.3" fill="#d9c4d0" stroke="#6c63b0" stroke-width="0.9"/>
<circle cx="994.0" cy="344.4" r="4.3" fill="#d9c4d0" stroke="#6c63b0" stroke-width="0.9"/>
<circle cx="994.0" cy="335.3" r="4.3" fill="#d9c4d0" stroke="#6c63b0" stroke-width="0.9"/>
<circle cx="994.0" cy="326.2" r="4.3" fill="#d9c4d0" stroke="#6c63b0" stroke-width="0.9"/>
<circle cx="994.0" cy="317.2" r="4.3" fill="#d9c4d0" stroke="#6c63b0" stroke-width="0.9"/>
<circle cx="994.0" cy="308.1" r="4.3" fill="#d9c4d0" stroke="#6c63b0" stroke-width="0.9"/>
<circle cx="994.0" cy="299.0" r="4.3" fill="#d9c4d0" stroke="#6c63b0" stroke-width="0.9"/>
<circle cx="994.0" cy="290.0" r="4.3" fill="#d9c4d0" stroke="#6c63b0" stroke-width="0.9"/>
<circle cx="994.0" cy="280.9" r="4.3" fill="#d9c4d0" stroke="#6c63b0" stroke-width="0.9"/>
<circle cx="994.0" cy="271.8" r="4.3" fill="#d9c4d0" stroke="#6c63b0" stroke-width="0.9"/>
<circle cx="994.0" cy="262.8" r="4.3" fill="#d9c4d0" stroke="#6c63b0" stroke-width="0.9"/>
<circle cx="994.0" cy="253.7" r="4.3" fill="#d9c4d0" stroke="#6c63b0" stroke-width="0.9"/>
<circle cx="994.0" cy="244.6" r="4.3" fill="#d9c4d0" stroke="#6c63b0" stroke-width="0.9"/>
<circle cx="994.0" cy="235.5" r="4.3" fill="#d9c4d0" stroke="#6c63b0" stroke-width="0.9"/>
<circle cx="1555.3" cy="238.0" r="4.3" fill="#f9d8c4" stroke="#e02828" stroke-width="0.9"/>
<circle cx="1563.9" cy="238.0" r="4.3" fill="#f9d8c4" stroke="#e02828" stroke-width="0.9"/>
<circle cx="1572.5" cy="238.0" r="4.3" fill="#f9d8c4" stroke="#e02828" stroke-width="0.9"/>
<circle cx="1581.1" cy="238.0" r="4.3" fill="#f9d8c4" stroke="#e02828" stroke-width="0.9"/>
<circle cx="1589.7" cy="238.0" r="4.3" fill="#f9d8c4" stroke="#e02828" stroke-width="0.9"/>
<circle cx="1598.3" cy="238.0" r="4.3" fill="#f9d8c4" stroke="#e02828" stroke-width="0.9"/>
<circle cx="1606.9" cy="238.0" r="4.3" fill="#f9d8c4" stroke="#e02828" stroke-width="0.9"/>
<circle cx="1615.5" cy="238.0" r="4.3" fill="#f9d8c4" stroke="#e02828" stroke-width="0.9"/>
<circle cx="1624.1" cy="238.0" r="4.3" fill="#f9d8c4" stroke="#e02828" stroke-width="0.9"/>
<circle cx="1632.7" cy="238.0" r="4.3" fill="#f9d8c4" stroke="#e02828" stroke-width="0.9"/>
<circle cx="1637.0" cy="242.6" r="4.3" fill="#f9d8c4" stroke="#e02828" stroke-width="0.9"/>
<circle cx="1637.0" cy="251.8" r="4.3" fill="#f9d8c4" stroke="#e02828" stroke-width="0.9"/>
<circle cx="1637.0" cy="261.0" r="4.3" fill="#f9d8c4" stroke="#e02828" stroke-width="0.9"/>
<circle cx="1637.0" cy="270.2" r="4.3" fill="#f9d8c4" stroke="#e02828" stroke-width="0.9"/>
<circle cx="1637.0" cy="279.4" r="4.3" fill="#f9d8c4" stroke="#e02828" stroke-width="0.9"/>
<circle cx="1637.0" cy="288.6" r="4.3" fill="#f9d8c4" stroke="#e02828" stroke-width="0.9"/>
<circle cx="1637.0" cy="297.8" r="4.3" fill="#f9d8c4" stroke="#e02828" stroke-width="0.9"/>
<circle cx="1637.0" cy="307.0" r="4.3" fill="#f9d8c4" stroke="#e02828" stroke-width="0.9"/>
<circle cx="1637.0" cy="316.2" r="4.3" fill="#f9d8c4" stroke="#e02828" stroke-width="0.9"/>
<circle cx="1637.0" cy="325.4" r="4.3" fill="#f9d8c4" stroke="#e02828" stroke-width="0.9"/>
<circle cx="1551.0" cy="242.7" r="4.3" fill="#f9d8c4" stroke="#e02828" stroke-width="0.9"/>
<circle cx="1551.0" cy="252.0" r="4.3" fill="#f9d8c4" stroke="#e02828" stroke-width="0.9"/>
<circle cx="1551.0" cy="261.3" r="4.3" fill="#f9d8c4" stroke="#e02828" stroke-width="0.9"/>
<circle cx="1551.0" cy="270.7" r="4.3" fill="#f9d8c4" stroke="#e02828" stroke-width="0.9"/>
<circle cx="1551.0" cy="280.0" r="4.3" fill="#f9d8c4" stroke="#e02828" stroke-width="0.9"/>
<circle cx="1551.0" cy="289.3" r="4.3" fill="#f9d8c4" stroke="#e02828" stroke-width="0.9"/>
<circle cx="792.4" cy="382.6" r="4.3" fill="#c5bce0" stroke="#6a62b0" stroke-width="0.9"/>
<circle cx="801.1" cy="381.8" r="4.3" fill="#c5bce0" stroke="#6a62b0" stroke-width="0.9"/>
<circle cx="809.8" cy="381.0" r="4.3" fill="#c5bce0" stroke="#6a62b0" stroke-width="0.9"/>
<circle cx="818.5" cy="380.1" r="4.3" fill="#c5bce0" stroke="#6a62b0" stroke-width="0.9"/>
<circle cx="827.3" cy="379.3" r="4.3" fill="#c5bce0" stroke="#6a62b0" stroke-width="0.9"/>
<circle cx="836.0" cy="378.5" r="4.3" fill="#c5bce0" stroke="#6a62b0" stroke-width="0.9"/>
<circle cx="844.7" cy="377.7" r="4.3" fill="#c5bce0" stroke="#6a62b0" stroke-width="0.9"/>
<circle cx="853.5" cy="376.9" r="4.3" fill="#c5bce0" stroke="#6a62b0" stroke-width="0.9"/>
<circle cx="862.2" cy="376.0" r="4.3" fill="#c5bce0" stroke="#6a62b0" stroke-width="0.9"/>
<circle cx="870.9" cy="375.2" r="4.3" fill="#c5bce0" stroke="#6a62b0" stroke-width="0.9"/>
<circle cx="879.6" cy="374.4" r="4.3" fill="#c5bce0" stroke="#6a62b0" stroke-width="0.9"/>
<circle cx="886.8" cy="377.2" r="4.3" fill="#c5bce0" stroke="#6a62b0" stroke-width="0.9"/>
<circle cx="892.2" cy="383.8" r="4.3" fill="#c5bce0" stroke="#6a62b0" stroke-width="0.9"/>
<circle cx="895.0" cy="391.4" r="4.3" fill="#c5bce0" stroke="#6a62b0" stroke-width="0.9"/>
<circle cx="895.0" cy="400.2" r="4.3" fill="#c5bce0" stroke="#6a62b0" stroke-width="0.9"/>
<circle cx="895.0" cy="409.1" r="4.3" fill="#c5bce0" stroke="#6a62b0" stroke-width="0.9"/>
<circle cx="895.0" cy="417.9" r="4.3" fill="#c5bce0" stroke="#6a62b0" stroke-width="0.9"/>
<circle cx="895.0" cy="426.8" r="4.3" fill="#c5bce0" stroke="#6a62b0" stroke-width="0.9"/>
<circle cx="895.0" cy="435.6" r="4.3" fill="#c5bce0" stroke="#6a62b0" stroke-width="0.9"/>
<circle cx="895.0" cy="444.4" r="4.3" fill="#c5bce0" stroke="#6a62b0" stroke-width="0.9"/>
<circle cx="895.0" cy="453.2" r="4.3" fill="#c5bce0" stroke="#6a62b0" stroke-width="0.9"/>
<circle cx="895.0" cy="462.1" r="4.3" fill="#c5bce0" stroke="#6a62b0" stroke-width="0.9"/>
<circle cx="895.0" cy="470.9" r="4.3" fill="#c5bce0" stroke="#6a62b0" stroke-width="0.9"/>
<circle cx="895.0" cy="479.8" r="4.3" fill="#c5bce0" stroke="#6a62b0" stroke-width="0.9"/>
<circle cx="895.0" cy="488.6" r="4.3" fill="#c5bce0" stroke="#6a62b0" stroke-width="0.9"/>
<circle cx="895.0" cy="497.4" r="4.3" fill="#c5bce0" stroke="#6a62b0" stroke-width="0.9"/>
<circle cx="895.0" cy="506.2" r="4.3" fill="#c5bce0" stroke="#6a62b0" stroke-width="0.9"/>
<circle cx="895.0" cy="515.1" r="4.3" fill="#c5bce0" stroke="#6a62b0" stroke-width="0.9"/>
<circle cx="895.0" cy="523.9" r="4.3" fill="#c5bce0" stroke="#6a62b0" stroke-width="0.9"/>
<circle cx="895.0" cy="532.8" r="4.3" fill="#c5bce0" stroke="#6a62b0" stroke-width="0.9"/>
<circle cx="895.0" cy="541.6" r="4.3" fill="#c5bce0" stroke="#6a62b0" stroke-width="0.9"/>
<circle cx="895.0" cy="550.4" r="4.3" fill="#c5bce0" stroke="#6a62b0" stroke-width="0.9"/>
<circle cx="895.0" cy="559.2" r="4.3" fill="#c5bce0" stroke="#6a62b0" stroke-width="0.9"/>
<circle cx="895.0" cy="568.1" r="4.3" fill="#c5bce0" stroke="#6a62b0" stroke-width="0.9"/>
<circle cx="895.0" cy="576.9" r="4.3" fill="#c5bce0" stroke="#6a62b0" stroke-width="0.9"/>
<circle cx="895.0" cy="585.8" r="4.3" fill="#c5bce0" stroke="#6a62b0" stroke-width="0.9"/>
<circle cx="895.0" cy="594.6" r="4.3" fill="#c5bce0" stroke="#6a62b0" stroke-width="0.9"/>
<circle cx="892.2" cy="602.0" r="4.3" fill="#c5bce0" stroke="#6a62b0" stroke-width="0.9"/>
<circle cx="886.8" cy="608.0" r="4.3" fill="#c5bce0" stroke="#6a62b0" stroke-width="0.9"/>
<circle cx="879.6" cy="610.7" r="4.3" fill="#c5bce0" stroke="#6a62b0" stroke-width="0.9"/>
<circle cx="870.9" cy="610.0" r="4.3" fill="#c5bce0" stroke="#6a62b0" stroke-width="0.9"/>
<circle cx="862.2" cy="609.4" r="4.3" fill="#c5bce0" stroke="#6a62b0" stroke-width="0.9"/>
<circle cx="853.5" cy="608.8" r="4.3" fill="#c5bce0" stroke="#6a62b0" stroke-width="0.9"/>
<circle cx="844.7" cy="608.1" r="4.3" fill="#c5bce0" stroke="#6a62b0" stroke-width="0.9"/>
<circle cx="836.0" cy="607.5" r="4.3" fill="#c5bce0" stroke="#6a62b0" stroke-width="0.9"/>
<circle cx="827.3" cy="606.9" r="4.3" fill="#c5bce0" stroke="#6a62b0" stroke-width="0.9"/>
<circle cx="818.5" cy="606.2" r="4.3" fill="#c5bce0" stroke="#6a62b0" stroke-width="0.9"/>
<circle cx="809.8" cy="605.6" r="4.3" fill="#c5bce0" stroke="#6a62b0" stroke-width="0.9"/>
<circle cx="801.1" cy="605.0" r="4.3" fill="#c5bce0" stroke="#6a62b0" stroke-width="0.9"/>
<circle cx="792.4" cy="604.3" r="4.3" fill="#c5bce0" stroke="#6a62b0" stroke-width="0.9"/>
<circle cx="788.0" cy="599.6" r="4.3" fill="#c5bce0" stroke="#6a62b0" stroke-width="0.9"/>
<circle cx="788.0" cy="590.7" r="4.3" fill="#c5bce0" stroke="#6a62b0" stroke-width="0.9"/>
<circle cx="788.0" cy="581.9" r="4.3" fill="#c5bce0" stroke="#6a62b0" stroke-width="0.9"/>
<circle cx="788.0" cy="573.1" r="4.3" fill="#c5bce0" stroke="#6a62b0" stroke-width="0.9"/>
<circle cx="788.0" cy="564.2" r="4.3" fill="#c5bce0" stroke="#6a62b0" stroke-width="0.9"/>
<circle cx="788.0" cy="555.4" r="4.3" fill="#c5bce0" stroke="#6a62b0" stroke-width="0.9"/>
<circle cx="788.0" cy="546.5" r="4.3" fill="#c5bce0" stroke="#6a62b0" stroke-width="0.9"/>
<circle cx="788.0" cy="537.7" r="4.3" fill="#c5bce0" stroke="#6a62b0" stroke-width="0.9"/>
<circle cx="788.0" cy="528.9" r="4.3" fill="#c5bce0" stroke="#6a62b0" stroke-width="0.9"/>
<circle cx="788.0" cy="520.0" r="4.3" fill="#c5bce0" stroke="#6a62b0" stroke-width="0.9"/>
<circle cx="788.0" cy="511.2" r="4.3" fill="#c5bce0" stroke="#6a62b0" stroke-width="0.9"/>
<circle cx="788.0" cy="502.3" r="4.3" fill="#c5bce0" stroke="#6a62b0" stroke-width="0.9"/>
<circle cx="788.0" cy="493.5" r="4.3" fill="#c5bce0" stroke="#6a62b0" stroke-width="0.9"/>
<circle cx="788.0" cy="484.7" r="4.3" fill="#c5bce0" stroke="#6a62b0" stroke-width="0.9"/>
<circle cx="788.0" cy="475.8" r="4.3" fill="#c5bce0" stroke="#6a62b0" stroke-width="0.9"/>
<circle cx="788.0" cy="467.0" r="4.3" fill="#c5bce0" stroke="#6a62b0" stroke-width="0.9"/>
<circle cx="788.0" cy="458.1" r="4.3" fill="#c5bce0" stroke="#6a62b0" stroke-width="0.9"/>
<circle cx="788.0" cy="449.3" r="4.3" fill="#c5bce0" stroke="#6a62b0" stroke-width="0.9"/>
<circle cx="788.0" cy="440.5" r="4.3" fill="#c5bce0" stroke="#6a62b0" stroke-width="0.9"/>
<circle cx="788.0" cy="431.6" r="4.3" fill="#c5bce0" stroke="#6a62b0" stroke-width="0.9"/>
<circle cx="788.0" cy="422.8" r="4.3" fill="#c5bce0" stroke="#6a62b0" stroke-width="0.9"/>
<circle cx="788.0" cy="413.9" r="4.3" fill="#c5bce0" stroke="#6a62b0" stroke-width="0.9"/>
<circle cx="788.0" cy="405.1" r="4.3" fill="#c5bce0" stroke="#6a62b0" stroke-width="0.9"/>
<circle cx="788.0" cy="396.3" r="4.3" fill="#c5bce0" stroke="#6a62b0" stroke-width="0.9"/>
<circle cx="788.0" cy="387.4" r="4.3" fill="#c5bce0" stroke="#6a62b0" stroke-width="0.9"/>
<circle cx="1479.1" cy="416.0" r="3.2" fill="#c5e2a4" stroke="#e02828" stroke-width="0.9"/>
<circle cx="1485.2" cy="416.0" r="3.2" fill="#c5e2a4" stroke="#e02828" stroke-width="0.9"/>
<circle cx="1491.4" cy="416.0" r="3.2" fill="#c5e2a4" stroke="#e02828" stroke-width="0.9"/>
<circle cx="1497.5" cy="416.0" r="3.2" fill="#c5e2a4" stroke="#e02828" stroke-width="0.9"/>
<circle cx="1503.6" cy="416.0" r="3.2" fill="#c5e2a4" stroke="#e02828" stroke-width="0.9"/>
<circle cx="1509.8" cy="416.0" r="3.2" fill="#c5e2a4" stroke="#e02828" stroke-width="0.9"/>
<circle cx="1515.9" cy="416.0" r="3.2" fill="#c5e2a4" stroke="#e02828" stroke-width="0.9"/>
<circle cx="1519.0" cy="419.3" r="3.2" fill="#c5e2a4" stroke="#e02828" stroke-width="0.9"/>
<circle cx="1519.0" cy="425.8" r="3.2" fill="#c5e2a4" stroke="#e02828" stroke-width="0.9"/>
<circle cx="1519.0" cy="432.4" r="3.2" fill="#c5e2a4" stroke="#e02828" stroke-width="0.9"/>
<circle cx="1519.0" cy="439.0" r="3.2" fill="#c5e2a4" stroke="#e02828" stroke-width="0.9"/>
<circle cx="1519.0" cy="445.5" r="3.2" fill="#c5e2a4" stroke="#e02828" stroke-width="0.9"/>
<circle cx="1519.0" cy="452.1" r="3.2" fill="#c5e2a4" stroke="#e02828" stroke-width="0.9"/>
<circle cx="1519.0" cy="458.7" r="3.2" fill="#c5e2a4" stroke="#e02828" stroke-width="0.9"/>
<circle cx="1519.0" cy="465.2" r="3.2" fill="#c5e2a4" stroke="#e02828" stroke-width="0.9"/>
<circle cx="1519.0" cy="471.8" r="3.2" fill="#c5e2a4" stroke="#e02828" stroke-width="0.9"/>
<circle cx="1519.0" cy="478.3" r="3.2" fill="#c5e2a4" stroke="#e02828" stroke-width="0.9"/>
<circle cx="1519.0" cy="484.9" r="3.2" fill="#c5e2a4" stroke="#e02828" stroke-width="0.9"/>
<circle cx="1519.0" cy="491.5" r="3.2" fill="#c5e2a4" stroke="#e02828" stroke-width="0.9"/>
<circle cx="1519.0" cy="498.0" r="3.2" fill="#c5e2a4" stroke="#e02828" stroke-width="0.9"/>
<circle cx="1519.0" cy="504.6" r="3.2" fill="#c5e2a4" stroke="#e02828" stroke-width="0.9"/>
<circle cx="1519.0" cy="511.2" r="3.2" fill="#c5e2a4" stroke="#e02828" stroke-width="0.9"/>
<circle cx="1519.0" cy="517.7" r="3.2" fill="#c5e2a4" stroke="#e02828" stroke-width="0.9"/>
<circle cx="1515.9" cy="521.0" r="3.2" fill="#c5e2a4" stroke="#e02828" stroke-width="0.9"/>
<circle cx="1509.8" cy="521.0" r="3.2" fill="#c5e2a4" stroke="#e02828" stroke-width="0.9"/>
<circle cx="1503.6" cy="521.0" r="3.2" fill="#c5e2a4" stroke="#e02828" stroke-width="0.9"/>
<circle cx="1497.5" cy="521.0" r="3.2" fill="#c5e2a4" stroke="#e02828" stroke-width="0.9"/>
<circle cx="1491.4" cy="521.0" r="3.2" fill="#c5e2a4" stroke="#e02828" stroke-width="0.9"/>
<circle cx="1485.2" cy="521.0" r="3.2" fill="#c5e2a4" stroke="#e02828" stroke-width="0.9"/>
<circle cx="1479.1" cy="521.0" r="3.2" fill="#c5e2a4" stroke="#e02828" stroke-width="0.9"/>
<circle cx="1476.0" cy="517.7" r="3.2" fill="#c5e2a4" stroke="#e02828" stroke-width="0.9"/>
<circle cx="1476.0" cy="511.2" r="3.2" fill="#c5e2a4" stroke="#e02828" stroke-width="0.9"/>
<circle cx="1476.0" cy="504.6" r="3.2" fill="#c5e2a4" stroke="#e02828" stroke-width="0.9"/>
<circle cx="1476.0" cy="498.0" r="3.2" fill="#c5e2a4" stroke="#e02828" stroke-width="0.9"/>
<circle cx="1476.0" cy="491.5" r="3.2" fill="#c5e2a4" stroke="#e02828" stroke-width="0.9"/>
<circle cx="1476.0" cy="484.9" r="3.2" fill="#c5e2a4" stroke="#e02828" stroke-width="0.9"/>
<circle cx="1476.0" cy="478.3" r="3.2" fill="#c5e2a4" stroke="#e02828" stroke-width="0.9"/>
<circle cx="1476.0" cy="471.8" r="3.2" fill="#c5e2a4" stroke="#e02828" stroke-width="0.9"/>
<circle cx="1476.0" cy="465.2" r="3.2" fill="#c5e2a4" stroke="#e02828" stroke-width="0.9"/>
<circle cx="1476.0" cy="458.7" r="3.2" fill="#c5e2a4" stroke="#e02828" stroke-width="0.9"/>
<circle cx="1476.0" cy="452.1" r="3.2" fill="#c5e2a4" stroke="#e02828" stroke-width="0.9"/>
<circle cx="1476.0" cy="445.5" r="3.2" fill="#c5e2a4" stroke="#e02828" stroke-width="0.9"/>
<circle cx="1476.0" cy="439.0" r="3.2" fill="#c5e2a4" stroke="#e02828" stroke-width="0.9"/>
<circle cx="1476.0" cy="432.4" r="3.2" fill="#c5e2a4" stroke="#e02828" stroke-width="0.9"/>
<circle cx="1476.0" cy="425.8" r="3.2" fill="#c5e2a4" stroke="#e02828" stroke-width="0.9"/>
<circle cx="1476.0" cy="419.3" r="3.2" fill="#c5e2a4" stroke="#e02828" stroke-width="0.9"/>
<circle cx="1638.3" cy="419.0" r="4.3" fill="#f5b7b9" stroke="#e03a3a" stroke-width="0.9"/>
<circle cx="1646.9" cy="419.0" r="4.3" fill="#f5b7b9" stroke="#e03a3a" stroke-width="0.9"/>
<circle cx="1655.5" cy="419.0" r="4.3" fill="#f5b7b9" stroke="#e03a3a" stroke-width="0.9"/>
<circle cx="1664.0" cy="419.0" r="4.3" fill="#f5b7b9" stroke="#e03a3a" stroke-width="0.9"/>
<circle cx="1672.6" cy="419.0" r="4.3" fill="#f5b7b9" stroke="#e03a3a" stroke-width="0.9"/>
<circle cx="1681.2" cy="419.0" r="4.3" fill="#f5b7b9" stroke="#e03a3a" stroke-width="0.9"/>
<circle cx="1689.8" cy="419.0" r="4.3" fill="#f5b7b9" stroke="#e03a3a" stroke-width="0.9"/>
<circle cx="1698.4" cy="419.0" r="4.3" fill="#f5b7b9" stroke="#e03a3a" stroke-width="0.9"/>
<circle cx="1707.0" cy="419.0" r="4.3" fill="#f5b7b9" stroke="#e03a3a" stroke-width="0.9"/>
<circle cx="1715.5" cy="419.0" r="4.3" fill="#f5b7b9" stroke="#e03a3a" stroke-width="0.9"/>
<circle cx="1724.1" cy="419.0" r="4.3" fill="#f5b7b9" stroke="#e03a3a" stroke-width="0.9"/>
<circle cx="1732.7" cy="419.0" r="4.3" fill="#f5b7b9" stroke="#e03a3a" stroke-width="0.9"/>
<circle cx="1737.0" cy="423.6" r="4.3" fill="#f5b7b9" stroke="#e03a3a" stroke-width="0.9"/>
<circle cx="1737.0" cy="432.7" r="4.3" fill="#f5b7b9" stroke="#e03a3a" stroke-width="0.9"/>
<circle cx="1737.0" cy="441.8" r="4.3" fill="#f5b7b9" stroke="#e03a3a" stroke-width="0.9"/>
<circle cx="1737.0" cy="450.9" r="4.3" fill="#f5b7b9" stroke="#e03a3a" stroke-width="0.9"/>
<circle cx="1737.0" cy="460.1" r="4.3" fill="#f5b7b9" stroke="#e03a3a" stroke-width="0.9"/>
<circle cx="1737.0" cy="469.2" r="4.3" fill="#f5b7b9" stroke="#e03a3a" stroke-width="0.9"/>
<circle cx="1737.0" cy="478.3" r="4.3" fill="#f5b7b9" stroke="#e03a3a" stroke-width="0.9"/>
<circle cx="1737.0" cy="487.4" r="4.3" fill="#f5b7b9" stroke="#e03a3a" stroke-width="0.9"/>
<circle cx="1732.7" cy="492.0" r="4.3" fill="#f5b7b9" stroke="#e03a3a" stroke-width="0.9"/>
<circle cx="1724.1" cy="492.0" r="4.3" fill="#f5b7b9" stroke="#e03a3a" stroke-width="0.9"/>
<circle cx="1715.5" cy="492.0" r="4.3" fill="#f5b7b9" stroke="#e03a3a" stroke-width="0.9"/>
<circle cx="1707.0" cy="492.0" r="4.3" fill="#f5b7b9" stroke="#e03a3a" stroke-width="0.9"/>
<circle cx="1698.4" cy="492.0" r="4.3" fill="#f5b7b9" stroke="#e03a3a" stroke-width="0.9"/>
<circle cx="1689.8" cy="492.0" r="4.3" fill="#f5b7b9" stroke="#e03a3a" stroke-width="0.9"/>
<circle cx="1681.2" cy="492.0" r="4.3" fill="#f5b7b9" stroke="#e03a3a" stroke-width="0.9"/>
<circle cx="1672.6" cy="492.0" r="4.3" fill="#f5b7b9" stroke="#e03a3a" stroke-width="0.9"/>
<circle cx="1664.0" cy="492.0" r="4.3" fill="#f5b7b9" stroke="#e03a3a" stroke-width="0.9"/>
<circle cx="1655.5" cy="492.0" r="4.3" fill="#f5b7b9" stroke="#e03a3a" stroke-width="0.9"/>
<circle cx="1646.9" cy="492.0" r="4.3" fill="#f5b7b9" stroke="#e03a3a" stroke-width="0.9"/>
<circle cx="1638.3" cy="492.0" r="4.3" fill="#f5b7b9" stroke="#e03a3a" stroke-width="0.9"/>
<circle cx="1634.0" cy="487.4" r="4.3" fill="#f5b7b9" stroke="#e03a3a" stroke-width="0.9"/>
<circle cx="1634.0" cy="478.3" r="4.3" fill="#f5b7b9" stroke="#e03a3a" stroke-width="0.9"/>
<circle cx="1634.0" cy="469.2" r="4.3" fill="#f5b7b9" stroke="#e03a3a" stroke-width="0.9"/>
<circle cx="1634.0" cy="460.1" r="4.3" fill="#f5b7b9" stroke="#e03a3a" stroke-width="0.9"/>
<circle cx="1634.0" cy="450.9" r="4.3" fill="#f5b7b9" stroke="#e03a3a" stroke-width="0.9"/>
<circle cx="1634.0" cy="441.8" r="4.3" fill="#f5b7b9" stroke="#e03a3a" stroke-width="0.9"/>
<circle cx="1634.0" cy="432.7" r="4.3" fill="#f5b7b9" stroke="#e03a3a" stroke-width="0.9"/>
<circle cx="1634.0" cy="423.6" r="4.3" fill="#f5b7b9" stroke="#e03a3a" stroke-width="0.9"/>
<path d="M994,231 H1109 V350 Q1109,357 1101,357 L1003,365 Q994,366 994,356 Z" stroke="#5a3a20" stroke-width="1.2" fill="#fdd7b0"/>
<rect x="1162" y="231" width="112" height="60" rx="0" fill="#ffffc0" stroke="#c02020" stroke-width="1"/>
<path d="M1162,292 H1274 V345 L1175,352 Q1162,352 1162,340 Z" stroke="#c02020" stroke-width="1.2" fill="#b3f4a6"/>
<rect x="1301" y="257" width="139" height="55.5" rx="0" fill="#f8b08a" stroke="#222" stroke-width="1.5"/>
<line x1="1301" y1="262" x2="1440" y2="262" stroke="#444" stroke-width="1" stroke-dasharray="2 1.5"/>
<line x1="1301" y1="307" x2="1440" y2="307" stroke="#444" stroke-width="1" stroke-dasharray="2 1.5"/>
<rect x="1306" y="274" width="21" height="22" rx="0" fill="none" stroke="#333" stroke-width="1"/>
<path d="M1299,285 L1306,279 V291 Z" stroke="#333" stroke-width="0.8" fill="#fff"/>
<text x="1316" y="288" font-size="5" fill="#333" text-anchor="middle" font-weight="normal" font-family="Liberation Sans">A7.01</text>
<text x="1370" y="285" font-size="6.3" fill="#1a1a1a" text-anchor="middle" font-weight="bold" font-family="Liberation Sans" letter-spacing="0.2">CONFERENCE  207</text>
<line x1="1340.705" y1="286.5" x2="1399.295" y2="286.5" stroke="#1a1a1a" stroke-width="1"/>
<text x="1371" y="297" font-size="7" fill="#333" text-anchor="middle" font-weight="bold" font-family="Liberation Serif">23.152 sq m</text>
<path d="M1551,238 H1637 V330 H1610 A57,57 0 0 0 1551,294 Z" stroke="none" stroke-width="0" fill="#f9d8c4"/>
<rect x="1829" y="231" width="99" height="59" rx="0" fill="#ffffc0" stroke="#c02020" stroke-width="1"/>
<path d="M788,383 L884,374 Q895,374 895,387 V599 Q895,611 884,611 L788,604 Z" stroke="#333" stroke-width="1" fill="#d9cae2"/>
<rect x="943" y="418" width="352" height="151" rx="6" fill="#b3c6da" stroke="#d03030" stroke-width="1.4"/>
<rect x="1476" y="416" width="43" height="105" rx="0" fill="#c5e2a4" stroke="#c02020" stroke-width="1"/>
<rect x="1587" y="422" width="34" height="45" rx="0" fill="#fff9a8" stroke="#c02020" stroke-width="1.5"/>
<rect x="1634" y="419" width="103" height="73" rx="0" fill="#f5b7b9" stroke="none" stroke-width="0"/>
<line x1="787" y1="230.5" x2="1928" y2="230.5" stroke="#000" stroke-width="3"/>
<line x1="788.5" y1="229" x2="788.5" y2="758" stroke="#000" stroke-width="3"/>
<line x1="787" y1="756.5" x2="1928" y2="756.5" stroke="#000" stroke-width="3"/>
<path d="M1051.7,231 L1051.7,362" stroke="#262626" stroke-width="4" fill="none"/>
<path d="M1051.7,231 L1051.7,362" stroke="#fff" stroke-width="1.6" fill="none" stroke-dasharray="2.5 1.5"/>
<path d="M994,290.7 L1109,290.7" stroke="#262626" stroke-width="4" fill="none"/>
<path d="M994,290.7 L1109,290.7" stroke="#fff" stroke-width="1.6" fill="none" stroke-dasharray="2.5 1.5"/>
<path d="M995,231 L995,356" stroke="#262626" stroke-width="3" fill="none"/>
<path d="M995,231 L995,356" stroke="#fff" stroke-width="1" fill="none" stroke-dasharray="2.5 1.5"/>
<path d="M1108,231 L1108,352" stroke="#262626" stroke-width="3" fill="none"/>
<path d="M1108,231 L1108,352" stroke="#fff" stroke-width="1" fill="none" stroke-dasharray="2.5 1.5"/>
<path d="M996,287.5 L996.0,270.5 A17,17 0 0 1 1013.0,287.5 Z" stroke="#1a1a1a" stroke-width="0.9" fill="none"/>
<path d="M996,295 L1013.0,295.0 A17,17 0 0 1 996.0,312.0 Z" stroke="#1a1a1a" stroke-width="0.9" fill="none"/>
<path d="M1107,287.5 L1090.0,287.5 A17,17 0 0 1 1107.0,270.5 Z" stroke="#1a1a1a" stroke-width="0.9" fill="none"/>
<path d="M1107,295 L1107.0,312.0 A17,17 0 0 1 1090.0,295.0 Z" stroke="#1a1a1a" stroke-width="0.9" fill="none"/>
<circle cx="996" cy="279" r="5" fill="none" stroke="#333" stroke-width="0.8"/>
<circle cx="996" cy="302" r="5" fill="none" stroke="#333" stroke-width="0.8"/>
<circle cx="1107" cy="279" r="5" fill="none" stroke="#333" stroke-width="0.8"/>
<circle cx="1107" cy="302" r="5" fill="none" stroke="#333" stroke-width="0.8"/>
<text x="1022" y="259" font-size="6.5" fill="#1a1a1a" text-anchor="middle" font-weight="bold" font-family="Liberation Sans" letter-spacing="0.2">MEETING  201</text>
<line x1="997.82" y1="260.5" x2="1046.18" y2="260.5" stroke="#1a1a1a" stroke-width="1"/>
<text x="1080" y="259" font-size="6.5" fill="#1a1a1a" text-anchor="middle" font-weight="bold" font-family="Liberation Sans" letter-spacing="0.2">MEETING  203</text>
<line x1="1055.82" y1="260.5" x2="1104.18" y2="260.5" stroke="#1a1a1a" stroke-width="1"/>
<text x="1024" y="326" font-size="6.5" fill="#1a1a1a" text-anchor="middle" font-weight="bold" font-family="Liberation Sans" letter-spacing="0.2">MEETING  202</text>
<line x1="999.82" y1="327.5" x2="1048.18" y2="327.5" stroke="#1a1a1a" stroke-width="1"/>
<text x="1080" y="326" font-size="6.5" fill="#1a1a1a" text-anchor="middle" font-weight="bold" font-family="Liberation Sans" letter-spacing="0.2">MEETING  204</text>
<line x1="1055.82" y1="327.5" x2="1104.18" y2="327.5" stroke="#1a1a1a" stroke-width="1"/>
<path d="M1162,291 L1274,291" stroke="#262626" stroke-width="3.5" fill="none"/>
<path d="M1162,291 L1274,291" stroke="#fff" stroke-width="1.1" fill="none" stroke-dasharray="2.5 1.5"/>
<path d="M1276,231 L1276,345" stroke="#262626" stroke-width="3" fill="none"/>
<path d="M1276,231 L1276,345" stroke="#fff" stroke-width="1" fill="none" stroke-dasharray="2.5 1.5"/>
<path d="M1164,287.5 L1164.0,271.5 A16,16 0 0 1 1180.0,287.5 Z" stroke="#1a1a1a" stroke-width="0.9" fill="none"/>
<path d="M1164,295 L1180.0,295.0 A16,16 0 0 1 1164.0,311.0 Z" stroke="#1a1a1a" stroke-width="0.9" fill="none"/>
<circle cx="1164" cy="279" r="5" fill="none" stroke="#333" stroke-width="0.8"/>
<circle cx="1164" cy="302" r="5" fill="none" stroke="#333" stroke-width="0.8"/>
<text x="1216" y="262" font-size="6.5" fill="#1a1a1a" text-anchor="middle" font-weight="bold" font-family="Liberation Sans" letter-spacing="0.2">OFFICE  205</text>
<line x1="1193.835" y1="263.5" x2="1238.165" y2="263.5" stroke="#1a1a1a" stroke-width="1"/>
<text x="1218" y="275" font-size="6.5" fill="#e03030" text-anchor="middle" font-weight="normal" font-family="Liberation Sans">204.616 sf</text>
<text x="1216" y="321" font-size="6.5" fill="#204020" text-anchor="middle" font-weight="bold" font-family="Liberation Sans" letter-spacing="0.2">OFFICE  206</text>
<line x1="1193.835" y1="322.5" x2="1238.165" y2="322.5" stroke="#204020" stroke-width="1"/>
<text x="1216" y="332" font-size="6.5" fill="#c03030" text-anchor="middle" font-weight="normal" font-family="Liberation Sans">193.615 sf</text>
<line x1="891" y1="373.5" x2="1002" y2="365.4" stroke="#222" stroke-width="1"/>
<line x1="1109" y1="355" x2="1162" y2="350" stroke="#222" stroke-width="1" stroke-dasharray="2 2"/>
<text x="886" y="300" font-size="6.5" fill="#1a1a1a" text-anchor="middle" font-weight="bold" font-family="Liberation Sans" letter-spacing="0.2">OPEN OFFICE  200</text>
<line x1="853.76" y1="301.5" x2="918.24" y2="301.5" stroke="#1a1a1a" stroke-width="1"/>
<path d="M1276,345 L1294,343" stroke="#262626" stroke-width="3" fill="none"/>
<path d="M1276,345 L1294,343" stroke="#fff" stroke-width="1" fill="none" stroke-dasharray="2.5 1.5"/>
<path d="M1294,343 L1294.0,329.0 A14,14 0 0 1 1308.0,343.0 Z" stroke="#1a1a1a" stroke-width="0.9" fill="none"/>
<circle cx="1298" cy="340" r="5" fill="none" stroke="#333" stroke-width="0.8"/>
<path d="M1294,343 L1460,330" stroke="#262626" stroke-width="4" fill="none"/>
<path d="M1294,343 L1460,330" stroke="#fff" stroke-width="1.6" fill="none" stroke-dasharray="2.5 1.5"/>
<path d="M1462,329 L1448.0,329.0 A14,14 0 0 1 1462.0,315.0 Z" stroke="#1a1a1a" stroke-width="0.9" fill="none"/>
<circle cx="1449" cy="324" r="5" fill="none" stroke="#333" stroke-width="0.8"/>
<path d="M1465,315 L1465,329" stroke="#262626" stroke-width="3" fill="none"/>
<path d="M1465,315 L1465,329" stroke="#fff" stroke-width="1" fill="none" stroke-dasharray="2.5 1.5"/>
<path d="M1469,231 L1469,331" stroke="#262626" stroke-width="3.5" fill="none"/>
<path d="M1469,231 L1469,331" stroke="#fff" stroke-width="1.1" fill="none" stroke-dasharray="2.5 1.5"/>
<path d="M1551,231 L1551,295" stroke="#262626" stroke-width="3.5" fill="none"/>
<path d="M1551,231 L1551,295" stroke="#fff" stroke-width="1.1" fill="none" stroke-dasharray="2.5 1.5"/>
<path d="M1637,231 L1637,331" stroke="#262626" stroke-width="3.5" fill="none"/>
<path d="M1637,231 L1637,331" stroke="#fff" stroke-width="1.1" fill="none" stroke-dasharray="2.5 1.5"/>
<path d="M1718,231 L1718,335" stroke="#262626" stroke-width="3.5" fill="none"/>
<path d="M1718,231 L1718,335" stroke="#fff" stroke-width="1.1" fill="none" stroke-dasharray="2.5 1.5"/>
<path d="M1829,231 L1829,345" stroke="#262626" stroke-width="3.5" fill="none"/>
<path d="M1829,231 L1829,345" stroke="#fff" stroke-width="1.1" fill="none" stroke-dasharray="2.5 1.5"/>
<path d="M1469,329 L1498,330" stroke="#262626" stroke-width="3.5" fill="none"/>
<path d="M1469,329 L1498,330" stroke="#fff" stroke-width="1.1" fill="none" stroke-dasharray="2.5 1.5"/>
<path d="M1498,330 A57,57 0 0 1 1604,330" fill="none" stroke="#333" stroke-width="4"/>
<path d="M1498,330 A57,57 0 0 1 1604,330" fill="none" stroke="#fff" stroke-width="1.1" stroke-dasharray="2 1.5"/>
<path d="M1604,330 L1637,330" stroke="#262626" stroke-width="3.5" fill="none"/>
<path d="M1604,330 L1637,330" stroke="#fff" stroke-width="1.1" fill="none" stroke-dasharray="2.5 1.5"/>
<path d="M1637,330 L1716,335.5 L1807.5,342 L1928,350.5" stroke="#262626" stroke-width="4" fill="none"/>
<path d="M1637,330 L1716,335.5 L1807.5,342 L1928,350.5" stroke="#fff" stroke-width="1.6" fill="none" stroke-dasharray="2.5 1.5"/>
<path d="M1478,331 L1478.0,319.0 A12,12 0 0 1 1490.0,331.0 Z" stroke="#1a1a1a" stroke-width="0.9" fill="none"/>
<circle cx="1481" cy="329" r="5" fill="none" stroke="#333" stroke-width="0.8"/>
<path d="M1598,330 L1585.0,330.0 A13,13 0 0 1 1598.0,317.0 Z" stroke="#1a1a1a" stroke-width="0.9" fill="none"/>
<circle cx="1623" cy="327" r="5" fill="none" stroke="#333" stroke-width="0.8"/>
<path d="M1645,331 L1645.0,318.0 A13,13 0 0 1 1658.0,331.0 Z" stroke="#1a1a1a" stroke-width="0.9" fill="none"/>
<circle cx="1652" cy="332" r="5" fill="none" stroke="#333" stroke-width="0.8"/>
<path d="M1728,337 L1728.0,324.0 A13,13 0 0 1 1741.0,337.0 Z" stroke="#1a1a1a" stroke-width="0.9" fill="none"/>
<circle cx="1729" cy="336" r="5" fill="none" stroke="#333" stroke-width="0.8"/>
<path d="M1818,343 L1805.0,343.0 A13,13 0 0 1 1818.0,330.0 Z" stroke="#1a1a1a" stroke-width="0.9" fill="none"/>
<circle cx="1817" cy="343" r="5" fill="none" stroke="#333" stroke-width="0.8"/>
<path d="M1829,290.5 L1928,290.5" stroke="#262626" stroke-width="3.5" fill="none"/>
<path d="M1829,290.5 L1928,290.5" stroke="#fff" stroke-width="1.1" fill="none" stroke-dasharray="2.5 1.5"/>
<rect x="1481" y="248" width="56" height="29" rx="0" fill="none" stroke="#222" stroke-width="1" stroke-dasharray="2 1.5"/>
<text x="1508" y="285" font-size="6.5" fill="#1a1a1a" text-anchor="middle" font-weight="bold" font-family="Liberation Sans" letter-spacing="0.2">MEETING  208</text>
<line x1="1483.82" y1="286.5" x2="1532.18" y2="286.5" stroke="#1a1a1a" stroke-width="1"/>
<rect x="1565" y="248" width="56" height="29" rx="0" fill="none" stroke="#222" stroke-width="1" stroke-dasharray="2 1.5"/>
<text x="1593" y="285" font-size="6.5" fill="#1a1a1a" text-anchor="middle" font-weight="bold" font-family="Liberation Sans" letter-spacing="0.2">MEETING  209</text>
<line x1="1568.82" y1="286.5" x2="1617.18" y2="286.5" stroke="#1a1a1a" stroke-width="1"/>
<text x="1551" y="319" font-size="11" fill="#e01818" text-anchor="middle" font-weight="bold" font-family="Liberation Serif">Room 001</text>
<line x1="1563" y1="298" x2="1563" y2="307" stroke="#e01818" stroke-width="1"/>
<path d="M1522,328 H1579 Q1570,345 1550,345 Q1530,345 1522,328 Z" stroke="#222" stroke-width="1" fill="#fff"/>
<text x="1553" y="371" font-size="6.5" fill="#1a1a1a" text-anchor="middle" font-weight="bold" font-family="Liberation Sans" letter-spacing="0.2">RECEPTION  255</text>
<line x1="1524.79" y1="372.5" x2="1581.21" y2="372.5" stroke="#1a1a1a" stroke-width="1"/>
<rect x="1662" y="247" width="28" height="68" rx="0" fill="none" stroke="#222" stroke-width="1" stroke-dasharray="2 1.5"/>
<text x="1675" y="281" font-size="6.5" fill="#1a1a1a" text-anchor="middle" font-weight="bold" font-family="Liberation Sans" letter-spacing="0.2">MEETING  210</text>
<line x1="1650.82" y1="282.5" x2="1699.18" y2="282.5" stroke="#1a1a1a" stroke-width="1"/>
<rect x="1741" y="262" width="67" height="39" rx="0" fill="none" stroke="#222" stroke-width="1" stroke-dasharray="2 1.5"/>
<text x="1772" y="282" font-size="6.5" fill="#1a1a1a" text-anchor="middle" font-weight="bold" font-family="Liberation Sans" letter-spacing="0.2">CONFERENCE  211</text>
<line x1="1741.775" y1="283.5" x2="1802.225" y2="283.5" stroke="#1a1a1a" stroke-width="1"/>
<text x="1878" y="263" font-size="6.5" fill="#1a1a1a" text-anchor="middle" font-weight="bold" font-family="Liberation Sans" letter-spacing="0.2">OFFICE  212</text>
<line x1="1855.835" y1="264.5" x2="1900.165" y2="264.5" stroke="#1a1a1a" stroke-width="1"/>
<text x="1883" y="250" font-size="6.5" fill="#e03030" text-anchor="middle" font-weight="normal" font-family="Liberation Sans">204.512 sf</text>
<text x="1878" y="322" font-size="6.5" fill="#1a1a1a" text-anchor="middle" font-weight="bold" font-family="Liberation Sans" letter-spacing="0.2">OFFICE  213</text>
<line x1="1855.835" y1="323.5" x2="1900.165" y2="323.5" stroke="#1a1a1a" stroke-width="1"/>
<path d="M788,383 L884,374" stroke="#262626" stroke-width="3.5" fill="none"/>
<path d="M788,383 L884,374" stroke="#fff" stroke-width="1.1" fill="none" stroke-dasharray="2.5 1.5"/>
<path d="M788,604 L884,611" stroke="#262626" stroke-width="3.5" fill="none"/>
<path d="M788,604 L884,611" stroke="#fff" stroke-width="1.1" fill="none" stroke-dasharray="2.5 1.5"/>
<path d="M893,385 L893,605" stroke="#262626" stroke-width="3" fill="none"/>
<path d="M893,385 L893,605" stroke="#fff" stroke-width="1" fill="none" stroke-dasharray="2.5 1.5"/>
<path d="M788,438 L893,438" stroke="#262626" stroke-width="3.5" fill="none"/>
<path d="M788,438 L893,438" stroke="#fff" stroke-width="1.1" fill="none" stroke-dasharray="2.5 1.5"/>
<path d="M788,549 L893,549" stroke="#262626" stroke-width="3.5" fill="none"/>
<path d="M788,549 L893,549" stroke="#fff" stroke-width="1.1" fill="none" stroke-dasharray="2.5 1.5"/>
<path d="M892,435 L875.0,435.0 A17,17 0 0 1 892.0,418.0 Z" stroke="#1a1a1a" stroke-width="0.9" fill="none"/>
<path d="M892,441 L892.0,458.0 A17,17 0 0 1 875.0,441.0 Z" stroke="#1a1a1a" stroke-width="0.9" fill="none"/>
<circle cx="890" cy="426" r="5" fill="none" stroke="#333" stroke-width="0.8"/>
<circle cx="890" cy="450" r="5" fill="none" stroke="#333" stroke-width="0.8"/>
<path d="M892,546 L875.0,546.0 A17,17 0 0 1 892.0,529.0 Z" stroke="#1a1a1a" stroke-width="0.9" fill="none"/>
<path d="M892,552 L892.0,569.0 A17,17 0 0 1 875.0,552.0 Z" stroke="#1a1a1a" stroke-width="0.9" fill="none"/>
<circle cx="890" cy="537" r="5" fill="none" stroke="#333" stroke-width="0.8"/>
<circle cx="890" cy="561" r="5" fill="none" stroke="#333" stroke-width="0.8"/>
<rect x="819" y="452" width="44" height="83.5" rx="0" fill="none" stroke="#222" stroke-width="1.2"/>
<text x="841" y="409" font-size="6.5" fill="#1a1a1a" text-anchor="middle" font-weight="bold" font-family="Liberation Sans" letter-spacing="0.2">MEETING  247</text>
<line x1="816.82" y1="410.5" x2="865.18" y2="410.5" stroke="#1a1a1a" stroke-width="1"/>
<text x="843" y="498" font-size="6.5" fill="#1a1a1a" text-anchor="middle" font-weight="bold" font-family="Liberation Sans" letter-spacing="0.2">CONFERENCE  246</text>
<line x1="812.775" y1="499.5" x2="873.225" y2="499.5" stroke="#1a1a1a" stroke-width="1"/>
<text x="844" y="583" font-size="6.5" fill="#1a1a1a" text-anchor="middle" font-weight="bold" font-family="Liberation Sans" letter-spacing="0.2">MEETING  245</text>
<line x1="819.82" y1="584.5" x2="868.18" y2="584.5" stroke="#1a1a1a" stroke-width="1"/>
<rect x="927" y="403" width="380" height="181" rx="12" fill="none" stroke="#222" stroke-width="1" stroke-dasharray="2 2"/>
<rect x="1219" y="419" width="75" height="149" rx="10" fill="none" stroke="#2a3a4a" stroke-width="3.5"/>
<rect x="1219" y="419" width="75" height="149" rx="10" fill="none" stroke="#fff" stroke-width="1" stroke-dasharray="2 1.5"/>
<path d="M1221,494 L1294,494" stroke="#262626" stroke-width="3.5" fill="none"/>
<path d="M1221,494 L1294,494" stroke="#fff" stroke-width="1.1" fill="none" stroke-dasharray="2.5 1.5"/>
<path d="M1221,494 L1221.0,479.0 A15,15 0 0 1 1236.0,494.0 Z" stroke="#1a1a1a" stroke-width="0.9" fill="none"/>
<path d="M1221,494 L1236.0,494.0 A15,15 0 0 1 1221.0,509.0 Z" stroke="#1a1a1a" stroke-width="0.9" fill="none"/>
<circle cx="1224" cy="483" r="5" fill="none" stroke="#333" stroke-width="0.8"/>
<circle cx="1224" cy="505" r="5" fill="none" stroke="#333" stroke-width="0.8"/>
<text x="1087" y="498" font-size="6.5" fill="#1a1a1a" text-anchor="middle" font-weight="bold" font-family="Liberation Sans" letter-spacing="0.2">OPEN OFFICE  248</text>
<line x1="1054.76" y1="499.5" x2="1119.24" y2="499.5" stroke="#1a1a1a" stroke-width="1"/>
<text x="1172" y="499" font-size="10" fill="#e01818" text-anchor="middle" font-weight="bold" font-family="Liberation Sans">160.886 sq m</text>
<text x="1267" y="457" font-size="6.5" fill="#1a1a1a" text-anchor="middle" font-weight="bold" font-family="Liberation Sans" letter-spacing="0.2">OFFICE  249</text>
<line x1="1244.835" y1="458.5" x2="1289.165" y2="458.5" stroke="#1a1a1a" stroke-width="1"/>
<text x="1264" y="531" font-size="6.5" fill="#1a1a1a" text-anchor="middle" font-weight="bold" font-family="Liberation Sans" letter-spacing="0.2">COPY  250</text>
<line x1="1245.865" y1="532.5" x2="1282.135" y2="532.5" stroke="#1a1a1a" stroke-width="1"/>
<path d="M1293.0,395 Q1293.0,385 1303.0,385 L1320.0,385 Q1330.0,385 1330.0,393 L1383.0,391 L1478.0,400 Q1520.0,404 1520.0,440 L1520.0,552 Q1520.0,585 1478.0,588 L1383.0,596 L1330.0,595 Q1330.0,602 1320.0,602 L1303.0,602 Q1293.0,602 1293.0,592 Z" stroke="#333" stroke-width="3.5" fill="none"/>
<path d="M1293.0,395 Q1293.0,385 1303.0,385 L1320.0,385 Q1330.0,385 1330.0,393 L1383.0,391 L1478.0,400 Q1520.0,404 1520.0,440 L1520.0,552 Q1520.0,585 1478.0,588 L1383.0,596 L1330.0,595 Q1330.0,602 1320.0,602 L1303.0,602 Q1293.0,602 1293.0,592 Z" stroke="#fff" stroke-width="1" fill="none" stroke-dasharray="2 1.5"/>
<path d="M1808.0,395 Q1808.0,385 1798.0,385 L1781.0,385 Q1771.0,385 1771.0,393 L1718.0,391 L1623.0,400 Q1581.0,404 1581.0,440 L1581.0,552 Q1581.0,585 1623.0,588 L1718.0,596 L1771.0,595 Q1771.0,602 1781.0,602 L1798.0,602 Q1808.0,602 1808.0,592 Z" stroke="#333" stroke-width="3.5" fill="none"/>
<path d="M1808.0,395 Q1808.0,385 1798.0,385 L1781.0,385 Q1771.0,385 1771.0,393 L1718.0,391 L1623.0,400 Q1581.0,404 1581.0,440 L1581.0,552 Q1581.0,585 1623.0,588 L1718.0,596 L1771.0,595 Q1771.0,602 1781.0,602 L1798.0,602 Q1808.0,602 1808.0,592 Z" stroke="#fff" stroke-width="1" fill="none" stroke-dasharray="2 1.5"/>
<path d="M1305,404 L1492,404" stroke="#262626" stroke-width="3" fill="none"/>
<path d="M1305,404 L1492,404" stroke="#fff" stroke-width="1" fill="none" stroke-dasharray="2.5 1.5"/>
<path d="M1305,404 L1305,590" stroke="#262626" stroke-width="3" fill="none"/>
<path d="M1305,404 L1305,590" stroke="#fff" stroke-width="1" fill="none" stroke-dasharray="2.5 1.5"/>
<path d="M1305,590 L1330,590" stroke="#262626" stroke-width="3" fill="none"/>
<path d="M1305,590 L1330,590" stroke="#fff" stroke-width="1" fill="none" stroke-dasharray="2.5 1.5"/>
<path d="M1350,508 L1350,590" stroke="#262626" stroke-width="3" fill="none"/>
<path d="M1350,508 L1350,590" stroke="#fff" stroke-width="1" fill="none" stroke-dasharray="2.5 1.5"/>
<path d="M1305,508 L1475,508" stroke="#262626" stroke-width="3" fill="none"/>
<path d="M1305,508 L1475,508" stroke="#fff" stroke-width="1" fill="none" stroke-dasharray="2.5 1.5"/>
<path d="M1305,568 L1520,568" stroke="#262626" stroke-width="3" fill="none"/>
<path d="M1305,568 L1520,568" stroke="#fff" stroke-width="1" fill="none" stroke-dasharray="2.5 1.5"/>
<path d="M1445,404 L1445,508" stroke="#262626" stroke-width="3" fill="none"/>
<path d="M1445,404 L1445,508" stroke="#fff" stroke-width="1" fill="none" stroke-dasharray="2.5 1.5"/>
<path d="M1475,404 L1475,570" stroke="#262626" stroke-width="3" fill="none"/>
<path d="M1475,404 L1475,570" stroke="#fff" stroke-width="1" fill="none" stroke-dasharray="2.5 1.5"/>
<path d="M1350,450 L1418,450" stroke="#262626" stroke-width="3" fill="none"/>
<path d="M1350,450 L1418,450" stroke="#fff" stroke-width="1" fill="none" stroke-dasharray="2.5 1.5"/>
<path d="M1418,404 L1418,450" stroke="#262626" stroke-width="3" fill="none"/>
<path d="M1418,404 L1418,450" stroke="#fff" stroke-width="1" fill="none" stroke-dasharray="2.5 1.5"/>
<path d="M1350,404 L1350,508" stroke="#262626" stroke-width="3" fill="none"/>
<path d="M1350,404 L1350,508" stroke="#fff" stroke-width="1" fill="none" stroke-dasharray="2.5 1.5"/>
<path d="M1796,404 L1609,404" stroke="#262626" stroke-width="3" fill="none"/>
<path d="M1796,404 L1609,404" stroke="#fff" stroke-width="1" fill="none" stroke-dasharray="2.5 1.5"/>
<path d="M1796,404 L1796,590" stroke="#262626" stroke-width="3" fill="none"/>
<path d="M1796,404 L1796,590" stroke="#fff" stroke-width="1" fill="none" stroke-dasharray="2.5 1.5"/>
<path d="M1796,590 L1771,590" stroke="#262626" stroke-width="3" fill="none"/>
<path d="M1796,590 L1771,590" stroke="#fff" stroke-width="1" fill="none" stroke-dasharray="2.5 1.5"/>
<path d="M1751,404 L1751,590" stroke="#262626" stroke-width="3" fill="none"/>
<path d="M1751,404 L1751,590" stroke="#fff" stroke-width="1" fill="none" stroke-dasharray="2.5 1.5"/>
<path d="M1751,508 L1581,508" stroke="#262626" stroke-width="3" fill="none"/>
<path d="M1751,508 L1581,508" stroke="#fff" stroke-width="1" fill="none" stroke-dasharray="2.5 1.5"/>
<path d="M1796,568 L1581,568" stroke="#262626" stroke-width="3" fill="none"/>
<path d="M1796,568 L1581,568" stroke="#fff" stroke-width="1" fill="none" stroke-dasharray="2.5 1.5"/>
<path d="M1626,404 L1626,570" stroke="#262626" stroke-width="3" fill="none"/>
<path d="M1626,404 L1626,570" stroke="#fff" stroke-width="1" fill="none" stroke-dasharray="2.5 1.5"/>
<path d="M1651,508 L1651,568" stroke="#262626" stroke-width="3" fill="none"/>
<path d="M1651,508 L1651,568" stroke="#fff" stroke-width="1" fill="none" stroke-dasharray="2.5 1.5"/>
<path d="M1704,508 L1704,548" stroke="#262626" stroke-width="3" fill="none"/>
<path d="M1704,508 L1704,548" stroke="#fff" stroke-width="1" fill="none" stroke-dasharray="2.5 1.5"/>
<path d="M1796,477 L1751,477" stroke="#262626" stroke-width="3" fill="none"/>
<path d="M1796,477 L1751,477" stroke="#fff" stroke-width="1" fill="none" stroke-dasharray="2.5 1.5"/>
<path d="M1626,521 L1581,521" stroke="#262626" stroke-width="3" fill="none"/>
<path d="M1626,521 L1581,521" stroke="#fff" stroke-width="1" fill="none" stroke-dasharray="2.5 1.5"/>
<rect x="1311" y="450" width="38" height="55" rx="0" fill="none" stroke="#222" stroke-width="1" stroke-dasharray="2 2"/>
<line x1="1325" y1="452" x2="1348" y2="452" stroke="#333" stroke-width="0.8"/>
<line x1="1325" y1="457" x2="1348" y2="457" stroke="#333" stroke-width="0.8"/>
<line x1="1325" y1="462" x2="1348" y2="462" stroke="#333" stroke-width="0.8"/>
<line x1="1325" y1="467" x2="1348" y2="467" stroke="#333" stroke-width="0.8"/>
<line x1="1325" y1="472" x2="1348" y2="472" stroke="#333" stroke-width="0.8"/>
<line x1="1325" y1="477" x2="1348" y2="477" stroke="#333" stroke-width="0.8"/>
<line x1="1325" y1="482" x2="1348" y2="482" stroke="#333" stroke-width="0.8"/>
<line x1="1325" y1="487" x2="1348" y2="487" stroke="#333" stroke-width="0.8"/>
<line x1="1325" y1="492" x2="1348" y2="492" stroke="#333" stroke-width="0.8"/>
<line x1="1325" y1="497" x2="1348" y2="497" stroke="#333" stroke-width="0.8"/>
<line x1="1325" y1="502" x2="1348" y2="502" stroke="#333" stroke-width="0.8"/>
<line x1="1336" y1="450" x2="1336" y2="505" stroke="#222" stroke-width="1"/>
<rect x="1449" y="404" width="24" height="104" rx="0" fill="none" stroke="#333" stroke-width="0.8"/>
<line x1="1449" y1="404" x2="1473" y2="508" stroke="#333" stroke-width="0.8"/>
<line x1="1473" y1="404" x2="1449" y2="508" stroke="#333" stroke-width="0.8"/>
<line x1="1480" y1="468" x2="1516" y2="421" stroke="#333" stroke-width="0.8"/>
<line x1="1480" y1="421" x2="1516" y2="468" stroke="#333" stroke-width="0.8"/>
<line x1="1480" y1="474" x2="1516" y2="518" stroke="#333" stroke-width="0.8"/>
<line x1="1480" y1="518" x2="1516" y2="474" stroke="#333" stroke-width="0.8"/>
<rect x="1480" y="421" width="36" height="47" rx="0" fill="none" stroke="#333" stroke-width="0.9"/>
<rect x="1480" y="473" width="36" height="45" rx="0" fill="none" stroke="#333" stroke-width="0.9"/>
<rect x="1484" y="537" width="32" height="29" rx="0" fill="none" stroke="#222" stroke-width="1"/>
<line x1="1484" y1="566" x2="1516" y2="537" stroke="#222" stroke-width="0.8"/>
<line x1="1484" y1="537" x2="1516" y2="566" stroke="#222" stroke-width="0.8"/>
<rect x="1500" y="524" width="17" height="12" rx="0" fill="none" stroke="#222" stroke-width="1"/>
<line x1="1500" y1="536" x2="1517" y2="524" stroke="#222" stroke-width="0.8"/>
<rect x="1322" y="524" width="12" height="14" rx="0" fill="none" stroke="#222" stroke-width="1"/>
<rect x="1312" y="550" width="14" height="20" rx="0" fill="none" stroke="#222" stroke-width="1"/>
<circle cx="1359" cy="516" r="3" fill="#fff" stroke="#222" stroke-width="1"/>
<circle cx="1398" cy="516" r="3" fill="#fff" stroke="#222" stroke-width="1"/>
<circle cx="1418" cy="516" r="3" fill="#fff" stroke="#222" stroke-width="1"/>
<circle cx="1437" cy="516" r="3" fill="#fff" stroke="#222" stroke-width="1"/>
<rect x="1392" y="537" width="52" height="14" rx="0" fill="none" stroke="#222" stroke-width="1"/>
<rect x="1440" y="535" width="20" height="18" rx="0" fill="none" stroke="#222" stroke-width="1"/>
<rect x="1405" y="569" width="10" height="8" rx="0" fill="none" stroke="#222" stroke-width="1.5"/>
<rect x="1428" y="569" width="10" height="8" rx="0" fill="none" stroke="#222" stroke-width="1.5"/>
<line x1="1376" y1="502" x2="1358" y2="530" stroke="#222" stroke-width="1"/>
<path d="M1330,590 L1330.0,578.0 A12,12 0 0 1 1342.0,590.0 Z" stroke="#1a1a1a" stroke-width="0.9" fill="none"/>
<circle cx="1340" cy="585" r="5" fill="none" stroke="#333" stroke-width="0.8"/>
<circle cx="1364" cy="585" r="5" fill="none" stroke="#333" stroke-width="0.8"/>
<circle cx="1343" cy="403" r="5" fill="none" stroke="#333" stroke-width="0.8"/>
<circle cx="1366" cy="404" r="5" fill="none" stroke="#333" stroke-width="0.8"/>
<circle cx="1416" cy="414" r="5" fill="none" stroke="#333" stroke-width="0.8"/>
<rect x="1321" y="394" width="8" height="10" rx="0" fill="#fff" stroke="#333" stroke-width="1"/>
<text x="1330" y="432" font-size="6.3" fill="#1a1a1a" text-anchor="middle" font-weight="bold" font-family="Liberation Sans" letter-spacing="0.2">STAIR  251</text>
<line x1="1310.47" y1="433.5" x2="1349.53" y2="433.5" stroke="#1a1a1a" stroke-width="1"/>
<text x="1383" y="432" font-size="6.3" fill="#1a1a1a" text-anchor="middle" font-weight="bold" font-family="Liberation Sans" letter-spacing="0.2">ELECTRICAL  253</text>
<line x1="1353.705" y1="433.5" x2="1412.295" y2="433.5" stroke="#1a1a1a" stroke-width="1"/>
<rect x="1357" y="437" width="10" height="13" rx="0" fill="none" stroke="#333" stroke-width="0.9" stroke-dasharray="2 1.5"/>
<rect x="1370" y="437" width="10" height="13" rx="0" fill="none" stroke="#333" stroke-width="0.9" stroke-dasharray="2 1.5"/>
<rect x="1383" y="437" width="10" height="13" rx="0" fill="none" stroke="#333" stroke-width="0.9" stroke-dasharray="2 1.5"/>
<rect x="1396" y="437" width="10" height="13" rx="0" fill="none" stroke="#333" stroke-width="0.9" stroke-dasharray="2 1.5"/>
<rect x="1409" y="437" width="10" height="13" rx="0" fill="none" stroke="#333" stroke-width="0.9" stroke-dasharray="2 1.5"/>
<text x="1401" y="476" font-size="6.3" fill="#1a1a1a" text-anchor="middle" font-weight="bold" font-family="Liberation Sans" letter-spacing="0.2">STORAGE  253A</text>
<line x1="1375.611" y1="477.5" x2="1426.389" y2="477.5" stroke="#1a1a1a" stroke-width="1"/>
<text x="1391" y="498" font-size="6.3" fill="#1a1a1a" text-anchor="middle" font-weight="bold" font-family="Liberation Sans" letter-spacing="0.2">STORAGE  254A</text>
<line x1="1365.611" y1="499.5" x2="1416.389" y2="499.5" stroke="#1a1a1a" stroke-width="1"/>
<text x="1329" y="545" font-size="6" fill="#222" text-anchor="middle" font-weight="bold" font-family="Liberation Sans" transform="rotate(-90 1329 545)">MOTHER'S RM  252</text>
<text x="1415" y="559" font-size="6.3" fill="#1a1a1a" text-anchor="middle" font-weight="bold" font-family="Liberation Sans" letter-spacing="0.2">WOMEN'S RR  254</text>
<line x1="1385.705" y1="560.5" x2="1444.295" y2="560.5" stroke="#1a1a1a" stroke-width="1"/>
<text x="1314" y="434" font-size="4" fill="#222" text-anchor="middle" font-weight="normal" font-family="Liberation Sans">UP</text>
<text x="1343" y="446" font-size="4" fill="#222" text-anchor="middle" font-weight="normal" font-family="Liberation Sans">UP</text>
<rect x="1528" y="466" width="42" height="14" rx="0" fill="#c8e6a0"/>
<text x="1549" y="475" font-size="5.5" fill="#e01818" text-anchor="middle" font-weight="bold" font-family="Liberation Sans">Split into three</text>
<line x1="1519" y1="473" x2="1528" y2="473" stroke="#e01818" stroke-width="1"/>
<text x="1550" y="489" font-size="6.3" fill="#1a1a1a" text-anchor="middle" font-weight="bold" font-family="Liberation Sans" letter-spacing="0.2">LOBBY  256</text>
<line x1="1530.47" y1="490.5" x2="1569.53" y2="490.5" stroke="#1a1a1a" stroke-width="1"/>
<line x1="1587" y1="422" x2="1621" y2="467" stroke="#333" stroke-width="0.8"/>
<line x1="1621" y1="422" x2="1587" y2="467" stroke="#333" stroke-width="0.8"/>
<rect x="1587" y="472" width="34" height="45" rx="0" fill="none" stroke="#222" stroke-width="1.2"/>
<line x1="1587" y1="472" x2="1621" y2="517" stroke="#222" stroke-width="0.8"/>
<line x1="1621" y1="472" x2="1587" y2="517" stroke="#222" stroke-width="0.8"/>
<rect x="1590" y="537" width="28" height="28" rx="0" fill="none" stroke="#222" stroke-width="1.2"/>
<line x1="1590" y1="565" x2="1618" y2="537" stroke="#222" stroke-width="0.8"/>
<line x1="1643" y1="424" x2="1643" y2="488" stroke="#555" stroke-width="1"/>
<line x1="1667" y1="424" x2="1667" y2="488" stroke="#555" stroke-width="1"/>
<rect x="1641" y="424" width="28" height="64" rx="0" fill="none" stroke="#666" stroke-width="0.8" stroke-dasharray="2 1.5"/>
<line x1="1641" y1="444" x2="1669" y2="444" stroke="#555" stroke-width="1"/>
<line x1="1641" y1="466" x2="1669" y2="466" stroke="#555" stroke-width="1"/>
<line x1="1676" y1="424" x2="1676" y2="488" stroke="#555" stroke-width="1"/>
<line x1="1700" y1="424" x2="1700" y2="488" stroke="#555" stroke-width="1"/>
<rect x="1674" y="424" width="28" height="64" rx="0" fill="none" stroke="#666" stroke-width="0.8" stroke-dasharray="2 1.5"/>
<line x1="1674" y1="444" x2="1702" y2="444" stroke="#555" stroke-width="1"/>
<line x1="1674" y1="466" x2="1702" y2="466" stroke="#555" stroke-width="1"/>
<line x1="1707" y1="424" x2="1707" y2="488" stroke="#555" stroke-width="1"/>
<line x1="1731" y1="424" x2="1731" y2="488" stroke="#555" stroke-width="1"/>
<rect x="1705" y="424" width="28" height="64" rx="0" fill="none" stroke="#666" stroke-width="0.8" stroke-dasharray="2 1.5"/>
<line x1="1705" y1="444" x2="1733" y2="444" stroke="#555" stroke-width="1"/>
<line x1="1705" y1="466" x2="1733" y2="466" stroke="#555" stroke-width="1"/>
<text x="1700" y="458" font-size="4" fill="#c01818" text-anchor="middle" font-weight="normal" font-family="Liberation Sans">Merge Chambers</text>
<line x1="1722" y1="458" x2="1740" y2="458" stroke="#c01818" stroke-width="0.8"/>
<text x="1688" y="413" font-size="6.3" fill="#1a1a1a" text-anchor="middle" font-weight="bold" font-family="Liberation Sans" letter-spacing="0.2">SERVER  257</text>
<line x1="1666.517" y1="414.5" x2="1709.483" y2="414.5" stroke="#1a1a1a" stroke-width="1"/>
<text x="1775" y="445" font-size="6" fill="#222" text-anchor="middle" font-weight="bold" font-family="Liberation Sans" transform="rotate(-90 1775 445)">STORAGE  260</text>
<line x1="1776" y1="423" x2="1776" y2="467" stroke="#222" stroke-width="1"/>
<text x="1712" y="502" font-size="6.3" fill="#1a1a1a" text-anchor="middle" font-weight="bold" font-family="Liberation Sans" letter-spacing="0.2">STORAGE  258A</text>
<line x1="1686.611" y1="503.5" x2="1737.389" y2="503.5" stroke="#1a1a1a" stroke-width="1"/>
<text x="1691" y="560" font-size="6.3" fill="#1a1a1a" text-anchor="middle" font-weight="bold" font-family="Liberation Sans" letter-spacing="0.2">MEN'S RR  258</text>
<line x1="1665.611" y1="561.5" x2="1716.389" y2="561.5" stroke="#1a1a1a" stroke-width="1"/>
<text x="1771" y="560" font-size="6.3" fill="#1a1a1a" text-anchor="middle" font-weight="bold" font-family="Liberation Sans" letter-spacing="0.2">STAIR  259</text>
<line x1="1751.47" y1="561.5" x2="1790.53" y2="561.5" stroke="#1a1a1a" stroke-width="1"/>
<rect x="1752" y="480" width="38" height="52" rx="0" fill="none" stroke="#222" stroke-width="1" stroke-dasharray="2 2"/>
<line x1="1766" y1="482" x2="1790" y2="482" stroke="#333" stroke-width="0.8"/>
<line x1="1766" y1="487" x2="1790" y2="487" stroke="#333" stroke-width="0.8"/>
<line x1="1766" y1="492" x2="1790" y2="492" stroke="#333" stroke-width="0.8"/>
<line x1="1766" y1="497" x2="1790" y2="497" stroke="#333" stroke-width="0.8"/>
<line x1="1766" y1="502" x2="1790" y2="502" stroke="#333" stroke-width="0.8"/>
<line x1="1766" y1="507" x2="1790" y2="507" stroke="#333" stroke-width="0.8"/>
<line x1="1766" y1="512" x2="1790" y2="512" stroke="#333" stroke-width="0.8"/>
<line x1="1766" y1="517" x2="1790" y2="517" stroke="#333" stroke-width="0.8"/>
<line x1="1766" y1="522" x2="1790" y2="522" stroke="#333" stroke-width="0.8"/>
<line x1="1766" y1="527" x2="1790" y2="527" stroke="#333" stroke-width="0.8"/>
<line x1="1778" y1="480" x2="1778" y2="532" stroke="#222" stroke-width="1"/>
<circle cx="1636" cy="516" r="3" fill="#fff" stroke="#222" stroke-width="1"/>
<circle cx="1662" cy="516" r="3" fill="#fff" stroke="#222" stroke-width="1"/>
<rect x="1674" y="512" width="30" height="24" rx="0" fill="none" stroke="#555" stroke-width="1" stroke-dasharray="3 2"/>
<rect x="1670" y="569" width="10" height="8" rx="0" fill="none" stroke="#222" stroke-width="1.5"/>
<rect x="1695" y="569" width="10" height="8" rx="0" fill="none" stroke="#222" stroke-width="1.5"/>
<circle cx="1660" cy="403" r="5" fill="none" stroke="#333" stroke-width="0.8"/>
<circle cx="1688" cy="400" r="5" fill="none" stroke="#333" stroke-width="0.8"/>
<circle cx="1795" cy="403" r="5" fill="none" stroke="#333" stroke-width="0.8"/>
<circle cx="1633" cy="568" r="5" fill="none" stroke="#333" stroke-width="0.8"/>
<circle cx="1718" cy="538" r="5" fill="none" stroke="#333" stroke-width="0.8"/>
<circle cx="1720" cy="585" r="5" fill="none" stroke="#333" stroke-width="0.8"/>
<circle cx="1745" cy="585" r="5" fill="none" stroke="#333" stroke-width="0.8"/>
<line x1="1710" y1="498" x2="1720" y2="530" stroke="#222" stroke-width="1"/>
<rect x="1808" y="418" width="64" height="151" rx="12" fill="none" stroke="#333" stroke-width="3"/>
<rect x="1808" y="418" width="64" height="151" rx="12" fill="none" stroke="#fff" stroke-width="1" stroke-dasharray="2 1.5"/>
<line x1="1872" y1="420" x2="1928" y2="420" stroke="#222" stroke-width="1.2"/>
<line x1="1872" y1="568" x2="1928" y2="568" stroke="#222" stroke-width="1.2"/>
<path d="M1810,494 L1872,494" stroke="#262626" stroke-width="3" fill="none"/>
<path d="M1810,494 L1872,494" stroke="#fff" stroke-width="1" fill="none" stroke-dasharray="2.5 1.5"/>
<path d="M1868,494 L1854.0,494.0 A14,14 0 0 1 1868.0,480.0 Z" stroke="#1a1a1a" stroke-width="0.9" fill="none"/>
<path d="M1868,494 L1868.0,508.0 A14,14 0 0 1 1854.0,494.0 Z" stroke="#1a1a1a" stroke-width="0.9" fill="none"/>
<circle cx="1867" cy="483" r="5" fill="none" stroke="#333" stroke-width="0.8"/>
<circle cx="1867" cy="505" r="5" fill="none" stroke="#333" stroke-width="0.8"/>
<text x="1838" y="455" font-size="6.3" fill="#1a1a1a" text-anchor="middle" font-weight="bold" font-family="Liberation Sans" letter-spacing="0.2">OFFICE  261</text>
<line x1="1816.517" y1="456.5" x2="1859.483" y2="456.5" stroke="#1a1a1a" stroke-width="1"/>
<text x="1835" y="531" font-size="6.3" fill="#1a1a1a" text-anchor="middle" font-weight="bold" font-family="Liberation Sans" letter-spacing="0.2">COPY  262</text>
<line x1="1817.423" y1="532.5" x2="1852.577" y2="532.5" stroke="#1a1a1a" stroke-width="1"/>
<path d="M1305,608 L1470,595" fill="none" stroke="#222" stroke-width="1.2" stroke-dasharray="4 3"/>
<path d="M1476,594 L1484,596 L1496,610 L1506,610" fill="none" stroke="#222" stroke-width="1"/>
<circle cx="1506" cy="611" r="11" fill="#fff" stroke="#222" stroke-width="1.1"/>
<line x1="1495" y1="611" x2="1517" y2="611" stroke="#222" stroke-width="0.8"/>
<text x="1506" y="608" font-size="4" fill="#222" text-anchor="middle" font-weight="normal" font-family="Liberation Sans">5</text>
<text x="1506" y="618" font-size="4.8" fill="#222" text-anchor="middle" font-weight="normal" font-family="Liberation Sans">A6.02</text>
<path d="M995,756 V634 Q995,624 1005,624 L1097,631 Q1107,631 1107,641 V756" stroke="#333" stroke-width="3.5" fill="none"/>
<path d="M995,756 V634 Q995,624 1005,624 L1097,631 Q1107,631 1107,641 V756" stroke="#fff" stroke-width="1" fill="none" stroke-dasharray="2 1.5"/>
<path d="M995,686.5 L1107,686.5" stroke="#262626" stroke-width="3.5" fill="none"/>
<path d="M995,686.5 L1107,686.5" stroke="#fff" stroke-width="1.1" fill="none" stroke-dasharray="2.5 1.5"/>
<path d="M1106,686.5 L1091.0,686.5 A15,15 0 0 1 1106.0,671.5 Z" stroke="#1a1a1a" stroke-width="0.9" fill="none"/>
<path d="M1106,686.5 L1106.0,701.5 A15,15 0 0 1 1091.0,686.5 Z" stroke="#1a1a1a" stroke-width="0.9" fill="none"/>
<circle cx="1105" cy="675.5" r="5" fill="none" stroke="#333" stroke-width="0.8"/>
<circle cx="1105" cy="697.5" r="5" fill="none" stroke="#333" stroke-width="0.8"/>
<path d="M1161,756 V646 Q1161,636 1171,636 L1265,641 Q1275,641 1275,651 V756" stroke="#333" stroke-width="3.5" fill="none"/>
<path d="M1161,756 V646 Q1161,636 1171,636 L1265,641 Q1275,641 1275,651 V756" stroke="#fff" stroke-width="1" fill="none" stroke-dasharray="2 1.5"/>
<path d="M1218,638.5 L1218,756" stroke="#262626" stroke-width="3" fill="none"/>
<path d="M1218,638.5 L1218,756" stroke="#fff" stroke-width="1" fill="none" stroke-dasharray="2.5 1.5"/>
<path d="M1161,698 L1275,698" stroke="#262626" stroke-width="3.5" fill="none"/>
<path d="M1161,698 L1275,698" stroke="#fff" stroke-width="1.1" fill="none" stroke-dasharray="2.5 1.5"/>
<path d="M1162,698 L1162.0,683.0 A15,15 0 0 1 1177.0,698.0 Z" stroke="#1a1a1a" stroke-width="0.9" fill="none"/>
<path d="M1162,698 L1177.0,698.0 A15,15 0 0 1 1162.0,713.0 Z" stroke="#1a1a1a" stroke-width="0.9" fill="none"/>
<circle cx="1163" cy="687" r="5" fill="none" stroke="#333" stroke-width="0.8"/>
<circle cx="1163" cy="709" r="5" fill="none" stroke="#333" stroke-width="0.8"/>
<path d="M1274,698 L1259.0,698.0 A15,15 0 0 1 1274.0,683.0 Z" stroke="#1a1a1a" stroke-width="0.9" fill="none"/>
<path d="M1274,698 L1274.0,713.0 A15,15 0 0 1 1259.0,698.0 Z" stroke="#1a1a1a" stroke-width="0.9" fill="none"/>
<circle cx="1273" cy="687" r="5" fill="none" stroke="#333" stroke-width="0.8"/>
<circle cx="1273" cy="709" r="5" fill="none" stroke="#333" stroke-width="0.8"/>
<path d="M1328,756 V657 Q1328,647 1338,647 L1430,655 Q1440,655 1440,665 V756" stroke="#333" stroke-width="3.5" fill="none"/>
<path d="M1328,756 V657 Q1328,647 1338,647 L1430,655 Q1440,655 1440,665 V756" stroke="#fff" stroke-width="1" fill="none" stroke-dasharray="2 1.5"/>
<path d="M1384,651.0 L1384,756" stroke="#262626" stroke-width="3" fill="none"/>
<path d="M1384,651.0 L1384,756" stroke="#fff" stroke-width="1" fill="none" stroke-dasharray="2.5 1.5"/>
<path d="M1328,698 L1440,698" stroke="#262626" stroke-width="3.5" fill="none"/>
<path d="M1328,698 L1440,698" stroke="#fff" stroke-width="1.1" fill="none" stroke-dasharray="2.5 1.5"/>
<path d="M1329,698 L1329.0,683.0 A15,15 0 0 1 1344.0,698.0 Z" stroke="#1a1a1a" stroke-width="0.9" fill="none"/>
<path d="M1329,698 L1344.0,698.0 A15,15 0 0 1 1329.0,713.0 Z" stroke="#1a1a1a" stroke-width="0.9" fill="none"/>
<circle cx="1330" cy="687" r="5" fill="none" stroke="#333" stroke-width="0.8"/>
<circle cx="1330" cy="709" r="5" fill="none" stroke="#333" stroke-width="0.8"/>
<path d="M1439,698 L1424.0,698.0 A15,15 0 0 1 1439.0,683.0 Z" stroke="#1a1a1a" stroke-width="0.9" fill="none"/>
<path d="M1439,698 L1439.0,713.0 A15,15 0 0 1 1424.0,698.0 Z" stroke="#1a1a1a" stroke-width="0.9" fill="none"/>
<circle cx="1438" cy="687" r="5" fill="none" stroke="#333" stroke-width="0.8"/>
<circle cx="1438" cy="709" r="5" fill="none" stroke="#333" stroke-width="0.8"/>
<path d="M1662,756 V662 Q1662,652 1672,652 L1765,645 Q1775,645 1775,655 V756" stroke="#333" stroke-width="3.5" fill="none"/>
<path d="M1662,756 V662 Q1662,652 1672,652 L1765,645 Q1775,645 1775,655 V756" stroke="#fff" stroke-width="1" fill="none" stroke-dasharray="2 1.5"/>
<path d="M1719,648.4690265486726 L1719,756" stroke="#262626" stroke-width="3" fill="none"/>
<path d="M1719,648.4690265486726 L1719,756" stroke="#fff" stroke-width="1" fill="none" stroke-dasharray="2.5 1.5"/>
<path d="M1662,698 L1775,698" stroke="#262626" stroke-width="3.5" fill="none"/>
<path d="M1662,698 L1775,698" stroke="#fff" stroke-width="1.1" fill="none" stroke-dasharray="2.5 1.5"/>
<path d="M1663,698 L1663.0,683.0 A15,15 0 0 1 1678.0,698.0 Z" stroke="#1a1a1a" stroke-width="0.9" fill="none"/>
<path d="M1663,698 L1678.0,698.0 A15,15 0 0 1 1663.0,713.0 Z" stroke="#1a1a1a" stroke-width="0.9" fill="none"/>
<circle cx="1664" cy="687" r="5" fill="none" stroke="#333" stroke-width="0.8"/>
<circle cx="1664" cy="709" r="5" fill="none" stroke="#333" stroke-width="0.8"/>
<path d="M1774,698 L1759.0,698.0 A15,15 0 0 1 1774.0,683.0 Z" stroke="#1a1a1a" stroke-width="0.9" fill="none"/>
<path d="M1774,698 L1774.0,713.0 A15,15 0 0 1 1759.0,698.0 Z" stroke="#1a1a1a" stroke-width="0.9" fill="none"/>
<circle cx="1773" cy="687" r="5" fill="none" stroke="#333" stroke-width="0.8"/>
<circle cx="1773" cy="709" r="5" fill="none" stroke="#333" stroke-width="0.8"/>
<path d="M1827,756 V651 Q1827,641 1837,641 L1928,633" stroke="#333" stroke-width="3.5" fill="none"/>
<path d="M1827,756 V651 Q1827,641 1837,641 L1928,633" stroke="#fff" stroke-width="1" fill="none" stroke-dasharray="2 1.5"/>
<path d="M1887,636 L1887,756" stroke="#262626" stroke-width="3" fill="none"/>
<path d="M1887,636 L1887,756" stroke="#fff" stroke-width="1" fill="none" stroke-dasharray="2.5 1.5"/>
<path d="M1827,698 L1928,698" stroke="#262626" stroke-width="3.5" fill="none"/>
<path d="M1827,698 L1928,698" stroke="#fff" stroke-width="1.1" fill="none" stroke-dasharray="2.5 1.5"/>
<path d="M1828,698 L1828.0,683.0 A15,15 0 0 1 1843.0,698.0 Z" stroke="#1a1a1a" stroke-width="0.9" fill="none"/>
<path d="M1828,698 L1843.0,698.0 A15,15 0 0 1 1828.0,713.0 Z" stroke="#1a1a1a" stroke-width="0.9" fill="none"/>
<circle cx="1831" cy="687" r="5" fill="none" stroke="#333" stroke-width="0.8"/>
<circle cx="1831" cy="709" r="5" fill="none" stroke="#333" stroke-width="0.8"/>
<text x="889" y="682" font-size="6.5" fill="#1a1a1a" text-anchor="middle" font-weight="bold" font-family="Liberation Sans" letter-spacing="0.2">OPEN OFFICE  244</text>
<line x1="856.76" y1="683.5" x2="921.24" y2="683.5" stroke="#1a1a1a" stroke-width="1"/>
<text x="1049" y="658" font-size="6.5" fill="#1a1a1a" text-anchor="middle" font-weight="bold" font-family="Liberation Sans" letter-spacing="0.2">OFFICE  242</text>
<line x1="1026.835" y1="659.5" x2="1071.165" y2="659.5" stroke="#1a1a1a" stroke-width="1"/>
<text x="1049" y="721" font-size="6.5" fill="#1a1a1a" text-anchor="middle" font-weight="bold" font-family="Liberation Sans" letter-spacing="0.2">OFFICE  243</text>
<line x1="1026.835" y1="722.5" x2="1071.165" y2="722.5" stroke="#1a1a1a" stroke-width="1"/>
<text x="1189" y="666" font-size="6.5" fill="#1a1a1a" text-anchor="middle" font-weight="bold" font-family="Liberation Sans" letter-spacing="0.2">OFFICE  240</text>
<line x1="1166.835" y1="667.5" x2="1211.165" y2="667.5" stroke="#1a1a1a" stroke-width="1"/>
<text x="1247" y="667" font-size="6.5" fill="#1a1a1a" text-anchor="middle" font-weight="bold" font-family="Liberation Sans" letter-spacing="0.2">OFFICE  238</text>
<line x1="1224.835" y1="668.5" x2="1269.165" y2="668.5" stroke="#1a1a1a" stroke-width="1"/>
<text x="1189" y="727" font-size="6.5" fill="#1a1a1a" text-anchor="middle" font-weight="bold" font-family="Liberation Sans" letter-spacing="0.2">OFFICE  241</text>
<line x1="1166.835" y1="728.5" x2="1211.165" y2="728.5" stroke="#1a1a1a" stroke-width="1"/>
<text x="1245" y="727" font-size="6.5" fill="#1a1a1a" text-anchor="middle" font-weight="bold" font-family="Liberation Sans" letter-spacing="0.2">OFFICE  239</text>
<line x1="1222.835" y1="728.5" x2="1267.165" y2="728.5" stroke="#1a1a1a" stroke-width="1"/>
<text x="1355" y="676" font-size="6.5" fill="#1a1a1a" text-anchor="middle" font-weight="bold" font-family="Liberation Sans" letter-spacing="0.2">OFFICE  236</text>
<line x1="1332.835" y1="677.5" x2="1377.165" y2="677.5" stroke="#1a1a1a" stroke-width="1"/>
<text x="1411" y="676" font-size="6.5" fill="#1a1a1a" text-anchor="middle" font-weight="bold" font-family="Liberation Sans" letter-spacing="0.2">MEETING  234</text>
<line x1="1386.82" y1="677.5" x2="1435.18" y2="677.5" stroke="#1a1a1a" stroke-width="1"/>
<text x="1355" y="732" font-size="6.5" fill="#1a1a1a" text-anchor="middle" font-weight="bold" font-family="Liberation Sans" letter-spacing="0.2">OFFICE  237</text>
<line x1="1332.835" y1="733.5" x2="1377.165" y2="733.5" stroke="#1a1a1a" stroke-width="1"/>
<text x="1411" y="732" font-size="6.5" fill="#1a1a1a" text-anchor="middle" font-weight="bold" font-family="Liberation Sans" letter-spacing="0.2">MEETING  235</text>
<line x1="1386.82" y1="733.5" x2="1435.18" y2="733.5" stroke="#1a1a1a" stroke-width="1"/>
<text x="1691" y="676" font-size="6.5" fill="#1a1a1a" text-anchor="middle" font-weight="bold" font-family="Liberation Sans" letter-spacing="0.2">MEETING  231</text>
<line x1="1666.82" y1="677.5" x2="1715.18" y2="677.5" stroke="#1a1a1a" stroke-width="1"/>
<text x="1743" y="676" font-size="6.5" fill="#1a1a1a" text-anchor="middle" font-weight="bold" font-family="Liberation Sans" letter-spacing="0.2">OFFICE  229</text>
<line x1="1720.835" y1="677.5" x2="1765.165" y2="677.5" stroke="#1a1a1a" stroke-width="1"/>
<text x="1692" y="727" font-size="6.5" fill="#1a1a1a" text-anchor="middle" font-weight="bold" font-family="Liberation Sans" letter-spacing="0.2">MEETING  232</text>
<line x1="1667.82" y1="728.5" x2="1716.18" y2="728.5" stroke="#1a1a1a" stroke-width="1"/>
<text x="1745" y="727" font-size="6.5" fill="#1a1a1a" text-anchor="middle" font-weight="bold" font-family="Liberation Sans" letter-spacing="0.2">OFFICE  230</text>
<line x1="1722.835" y1="728.5" x2="1767.165" y2="728.5" stroke="#1a1a1a" stroke-width="1"/>
<text x="1856" y="657" font-size="6.5" fill="#1a1a1a" text-anchor="middle" font-weight="bold" font-family="Liberation Sans" letter-spacing="0.2">OFFICE  227</text>
<line x1="1833.835" y1="658.5" x2="1878.165" y2="658.5" stroke="#1a1a1a" stroke-width="1"/>
<text x="1910" y="657" font-size="6.5" fill="#1a1a1a" text-anchor="middle" font-weight="bold" font-family="Liberation Sans" letter-spacing="0.2">OFFICE  225</text>
<line x1="1887.835" y1="658.5" x2="1932.165" y2="658.5" stroke="#1a1a1a" stroke-width="1"/>
<text x="1855" y="729" font-size="6.5" fill="#1a1a1a" text-anchor="middle" font-weight="bold" font-family="Liberation Sans" letter-spacing="0.2">OFFICE  228</text>
<line x1="1832.835" y1="730.5" x2="1877.165" y2="730.5" stroke="#1a1a1a" stroke-width="1"/>
<text x="1910" y="729" font-size="6.5" fill="#1a1a1a" text-anchor="middle" font-weight="bold" font-family="Liberation Sans" letter-spacing="0.2">OFFICE  226</text>
<line x1="1887.835" y1="730.5" x2="1932.165" y2="730.5" stroke="#1a1a1a" stroke-width="1"/>
<line x1="889" y1="612.8" x2="995" y2="624.5" stroke="#222" stroke-width="1"/>
<line x1="1107" y1="631" x2="1161" y2="636" stroke="#222" stroke-width="1" stroke-dasharray="2 2"/>
<line x1="1275" y1="641" x2="1328" y2="647" stroke="#222" stroke-width="1" stroke-dasharray="2 2"/>
<line x1="1440" y1="655" x2="1468" y2="658" stroke="#222" stroke-width="1" stroke-dasharray="2 2"/>
<line x1="1634" y1="658" x2="1662" y2="652" stroke="#222" stroke-width="1" stroke-dasharray="2 2"/>
<line x1="1775" y1="645" x2="1827" y2="641" stroke="#222" stroke-width="1" stroke-dasharray="2 2"/>
<line x1="1300" y1="641.5" x2="1275" y2="641" stroke="#222" stroke-width="1" stroke-dasharray="2 2"/>
<rect x="1437" y="645" width="230" height="125" rx="6" fill="none" stroke="#333" stroke-width="1.2" stroke-dasharray="4 3"/>
<path d="M1468,657 L1551,665 L1634,657" stroke="#262626" stroke-width="3.5" fill="none"/>
<path d="M1468,657 L1551,665 L1634,657" stroke="#fff" stroke-width="1.1" fill="none" stroke-dasharray="2.5 1.5"/>
<path d="M1468,657 L1468,682" stroke="#262626" stroke-width="3" fill="none"/>
<path d="M1468,657 L1468,682" stroke="#fff" stroke-width="1" fill="none" stroke-dasharray="2.5 1.5"/>
<path d="M1634,657 L1634,682" stroke="#262626" stroke-width="3" fill="none"/>
<path d="M1634,657 L1634,682" stroke="#fff" stroke-width="1" fill="none" stroke-dasharray="2.5 1.5"/>
<path d="M1468,670 L1634,670" stroke="#262626" stroke-width="3" fill="none"/>
<path d="M1468,670 L1634,670" stroke="#fff" stroke-width="1" fill="none" stroke-dasharray="2.5 1.5"/>
<path d="M1468,682 L1634,682" stroke="#262626" stroke-width="2.5" fill="none"/>
<path d="M1468,682 L1634,682" stroke="#fff" stroke-width="1" fill="none" stroke-dasharray="2.5 1.5"/>
<rect x="1473" y="672" width="24" height="9" rx="0" fill="none" stroke="#222" stroke-width="1"/>
<rect x="1605" y="672" width="24" height="9" rx="0" fill="none" stroke="#222" stroke-width="1"/>
<rect x="1509" y="672" width="84" height="5" rx="0" fill="none" stroke="#444" stroke-width="0.8" stroke-dasharray="2 1.5"/>
<rect x="1544" y="676" width="14" height="7" rx="0" fill="#fff" stroke="#222" stroke-width="1"/>
<rect x="1500" y="690" width="101" height="33" rx="0" fill="none" stroke="#333" stroke-width="1" stroke-dasharray="2 1.5"/>
<rect x="1500" y="698" width="101" height="17" rx="0" fill="none" stroke="#222" stroke-width="1"/>
<text x="1548" y="708" font-size="6.3" fill="#1a1a1a" text-anchor="middle" font-weight="bold" font-family="Liberation Sans" letter-spacing="0.2">BREAK  233</text>
<line x1="1528.47" y1="709.5" x2="1567.53" y2="709.5" stroke="#1a1a1a" stroke-width="1"/>
<rect x="1460" y="736" width="182" height="16" rx="0" fill="none" stroke="#222" stroke-width="1.2"/>
<rect x="1461" y="737" width="14" height="14" rx="0" fill="none" stroke="#222" stroke-width="1.5"/>
<rect x="1627" y="737" width="14" height="14" rx="0" fill="none" stroke="#222" stroke-width="1.5"/>
<line x1="1667" y1="770" x2="1678" y2="782" stroke="#222" stroke-width="1"/>
<circle cx="1683" cy="790" r="11" fill="#fff" stroke="#222" stroke-width="1"/>
<line x1="1672" y1="790" x2="1694" y2="790" stroke="#222" stroke-width="0.8"/>
<text x="1683" y="788" font-size="4.5" fill="#222" text-anchor="middle" font-weight="normal" font-family="Liberation Sans">01</text>
<text x="1683" y="797" font-size="4.5" fill="#222" text-anchor="middle" font-weight="normal" font-family="Liberation Sans">A6.01</text>
<line x1="697" y1="1038.5" x2="1928" y2="1038.5" stroke="#3a3a3a" stroke-width="1.6"/>
<line x1="702" y1="1156" x2="1928" y2="1156" stroke="#3a3a3a" stroke-width="1.6"/>
<line x1="702" y1="1038.5" x2="702" y2="1156" stroke="#3a3a3a" stroke-width="1.6"/>
<line x1="1146.5" y1="1038.5" x2="1146.5" y2="1156" stroke="#3a3a3a" stroke-width="1.6"/>
<line x1="1289" y1="1038.5" x2="1289" y2="1156" stroke="#3a3a3a" stroke-width="1.6"/>
<line x1="1432" y1="1038.5" x2="1432" y2="1156" stroke="#3a3a3a" stroke-width="1.6"/>
<line x1="1575" y1="1038.5" x2="1575" y2="1156" stroke="#3a3a3a" stroke-width="1.6"/>
<line x1="1718.5" y1="1038.5" x2="1718.5" y2="1156" stroke="#3a3a3a" stroke-width="1.6"/>
<line x1="1861.6" y1="1038.5" x2="1861.6" y2="1156" stroke="#3a3a3a" stroke-width="1.6"/>
<rect x="709.5" y="1046.5" width="190" height="101" rx="0" fill="none" stroke="#2f6070" stroke-width="1.6"/>
<rect x="713.5" y="1050.5" width="182" height="93" rx="0" fill="none" stroke="#2f6070" stroke-width="1"/>
<text x="805" y="1088" font-size="20" fill="#2f5f6d" text-anchor="middle" font-weight="bold" font-family="Liberation Sans" font-family="Liberation Sans" letter-spacing="1.5" textLength="143" lengthAdjust="spacingAndGlyphs">B R I G H T E R</text>
<text x="805" y="1110" font-size="20" fill="#2f5f6d" text-anchor="middle" font-weight="bold" font-family="Liberation Sans" textLength="143" lengthAdjust="spacingAndGlyphs">G R A P H I C S</text>
<text x="804" y="1124" font-size="4.5" fill="#2f5f6d" text-anchor="middle" font-weight="bold" font-family="Liberation Sans" textLength="112" lengthAdjust="spacingAndGlyphs">DIGITISING CONSTRUCTION SINCE 2003</text>
<path d="M909,1071 H954 V1116 H909 Z M916,1071 V1109 H947 V1078 H916" stroke="none" stroke-width="0" fill="#1b87d6" fill-rule="evenodd"/>
<rect x="909" y="1071" width="7" height="45" rx="0" fill="#1b87d6"/>
<rect x="909" y="1109" width="45" height="7" rx="0" fill="#1b87d6"/>
<rect x="947" y="1071" width="7" height="45" rx="0" fill="#1b87d6"/>
<rect x="916" y="1071" width="38" height="7" rx="0" fill="#1b87d6"/>
<rect x="924" y="1083" width="14" height="14" rx="0" fill="#1b87d6"/>
<rect x="916" y="1071" width="7" height="7" rx="0" fill="#fff"/>
<text x="965" y="1108" font-size="36" fill="#1b87d6" text-anchor="start" font-weight="bold" font-family="Liberation Sans" textLength="170" lengthAdjust="spacingAndGlyphs">BLUEBEAM</text>
<text x="965" y="1125" font-size="11" fill="#111" text-anchor="start" font-weight="bold" font-family="Liberation Sans" textLength="90" lengthAdjust="spacingAndGlyphs">Platinum Partner</text>
<text x="1158" y="1054" font-size="11.5" fill="#111" text-anchor="start" font-weight="bold" font-family="Liberation Sans">Capture Engineers</text>
<text x="1158" y="1067" font-size="11.5" fill="#111" text-anchor="start" font-weight="normal" font-family="Liberation Sans">Mechanical</text>
<text x="1158" y="1080" font-size="11.5" fill="#111" text-anchor="start" font-weight="normal" font-family="Liberation Sans">Electrical</text>
<text x="1158" y="1093" font-size="11.5" fill="#111" text-anchor="start" font-weight="normal" font-family="Liberation Sans">Plumbing</text>
<text x="1158" y="1119" font-size="11.5" fill="#111" text-anchor="start" font-weight="normal" font-family="Liberation Sans">1234 Miller St.</text>
<text x="1158" y="1132" font-size="11.5" fill="#111" text-anchor="start" font-weight="normal" font-family="Liberation Sans">Manchester, NH 06930</text>
<text x="1305" y="1054" font-size="11.5" fill="#111" text-anchor="start" font-weight="bold" font-family="Liberation Sans">REVU ARCHITECTS</text>
<text x="1305" y="1080" font-size="11.5" fill="#111" text-anchor="start" font-weight="normal" font-family="Liberation Sans">5555 N. Broad St</text>
<text x="1305" y="1093" font-size="11.5" fill="#111" text-anchor="start" font-weight="normal" font-family="Liberation Sans">Pasadena CA 91101</text>
<text x="1443" y="1054" font-size="11.5" fill="#111" text-anchor="start" font-weight="bold" font-family="Liberation Sans">OFFICE BUILDING</text>
<text x="1443" y="1080" font-size="11.5" fill="#111" text-anchor="start" font-weight="normal" font-family="Liberation Sans">Project No: 323232</text>
<text x="1443" y="1106" font-size="11.5" fill="#111" text-anchor="start" font-weight="normal" font-family="Liberation Sans">Project Address:</text>
<text x="1443" y="1119" font-size="11.5" fill="#111" text-anchor="start" font-weight="normal" font-family="Liberation Sans">123 Schonsett St</text>
<text x="1443" y="1132" font-size="11.5" fill="#111" text-anchor="start" font-weight="normal" font-family="Liberation Sans">Chicago, IL 60601</text>
<text x="1583" y="1054" font-size="5.5" fill="#111" text-anchor="start" font-weight="bold" font-family="Liberation Sans">LEGAL DISCLAIMER:</text>
<text x="1583" y="1067.0" font-size="5.2" fill="#222" text-anchor="start" font-weight="normal" font-family="Liberation Sans" letter-spacing="0.12">ALL IDEAS, DESIGNS, AND PLANS INDICATED</text>
<text x="1583" y="1073.7" font-size="5.2" fill="#222" text-anchor="start" font-weight="normal" font-family="Liberation Sans" letter-spacing="0.12">OR REPRESENTED BY THESE DRAWINGS</text>
<text x="1583" y="1080.4" font-size="5.2" fill="#222" text-anchor="start" font-weight="normal" font-family="Liberation Sans" letter-spacing="0.12">ARE OWNED AND ARE THE PROPERTY OF</text>
<text x="1583" y="1087.1" font-size="5.2" fill="#222" text-anchor="start" font-weight="normal" font-family="Liberation Sans" letter-spacing="0.12">BLUEBEAM, INC. AND WERE CREATED AND</text>
<text x="1583" y="1093.8" font-size="5.2" fill="#222" text-anchor="start" font-weight="normal" font-family="Liberation Sans" letter-spacing="0.12">DEVELOPED FOR DEMONSTRATION</text>
<text x="1583" y="1100.5" font-size="5.2" fill="#222" text-anchor="start" font-weight="normal" font-family="Liberation Sans" letter-spacing="0.12">PURPOSES ONLY. NONE OF SUCH IDEAS,</text>
<text x="1583" y="1107.2" font-size="5.2" fill="#222" text-anchor="start" font-weight="normal" font-family="Liberation Sans" letter-spacing="0.12">DESIGNS, OR PLANS SHALL BE USED FOR</text>
<text x="1583" y="1113.9" font-size="5.2" fill="#222" text-anchor="start" font-weight="normal" font-family="Liberation Sans" letter-spacing="0.12">ANY PURPOSE WHATSOEVER EXCEPT AS A</text>
<text x="1583" y="1120.6" font-size="5.2" fill="#222" text-anchor="start" font-weight="normal" font-family="Liberation Sans" letter-spacing="0.12">DEMONSTRATION SET WITHOUT THE</text>
<text x="1583" y="1127.3" font-size="5.2" fill="#222" text-anchor="start" font-weight="normal" font-family="Liberation Sans" letter-spacing="0.12">EXPRESSED WRITTEN CONCENT OF</text>
<text x="1583" y="1134.0" font-size="5.2" fill="#222" text-anchor="start" font-weight="normal" font-family="Liberation Sans" letter-spacing="0.12">BLUEBEAM, INC.</text>
<text x="1734" y="1047" font-size="4.2" fill="#333" text-anchor="start" font-weight="normal" font-family="Liberation Sans">DATE</text>
<text x="1845" y="1047" font-size="4.2" fill="#333" text-anchor="end" font-weight="normal" font-family="Liberation Sans">03/04/2018</text>
<line x1="1734" y1="1048.5" x2="1845" y2="1048.5" stroke="#444" stroke-width="0.8"/>
<text x="1734" y="1055" font-size="4.2" fill="#333" text-anchor="start" font-weight="normal" font-family="Liberation Sans">ISSUED FOR:</text>
<text x="1845" y="1055" font-size="4.2" fill="#333" text-anchor="end" font-weight="normal" font-family="Liberation Sans">INTERNAL REVIEW</text>
<line x1="1734" y1="1056.5" x2="1845" y2="1056.5" stroke="#444" stroke-width="0.8"/>
<text x="1734" y="1070" font-size="4.2" fill="#333" text-anchor="start" font-weight="normal" font-family="Liberation Sans">PROJECT</text>
<text x="1845" y="1070" font-size="4.2" fill="#333" text-anchor="end" font-weight="normal" font-family="Liberation Sans">3232</text>
<line x1="1734" y1="1071.5" x2="1845" y2="1071.5" stroke="#444" stroke-width="0.8"/>
<text x="1734" y="1078" font-size="4.2" fill="#333" text-anchor="start" font-weight="normal" font-family="Liberation Sans">DRAWN BY:</text>
<text x="1845" y="1078" font-size="4.2" fill="#333" text-anchor="end" font-weight="normal" font-family="Liberation Sans">Author</text>
<line x1="1734" y1="1079.5" x2="1845" y2="1079.5" stroke="#444" stroke-width="0.8"/>
<text x="1734" y="1085" font-size="4.2" fill="#333" text-anchor="start" font-weight="normal" font-family="Liberation Sans">CHECKED BY:</text>
<text x="1845" y="1085" font-size="4.2" fill="#333" text-anchor="end" font-weight="normal" font-family="Liberation Sans">Checker</text>
<line x1="1734" y1="1086.5" x2="1845" y2="1086.5" stroke="#444" stroke-width="0.8"/>
<text x="1734" y="1093" font-size="4.2" fill="#333" text-anchor="start" font-weight="normal" font-family="Liberation Sans">APPROVED BY:</text>
<text x="1845" y="1093" font-size="4.2" fill="#333" text-anchor="end" font-weight="normal" font-family="Liberation Sans">Approver</text>
<line x1="1734" y1="1094.5" x2="1845" y2="1094.5" stroke="#444" stroke-width="0.8"/>
<rect x="1734" y="1096" width="111" height="6" rx="0" fill="none" stroke="#222" stroke-width="0.9"/>
<text x="1898" y="1087.4" font-size="16" fill="#111" text-anchor="start" font-weight="bold" font-family="Liberation Sans">NOT</text>
<text x="1871" y="1105" font-size="16" fill="#111" text-anchor="start" font-weight="bold" font-family="Liberation Sans">CONSTI</text>
</svg></div>
<div class="a" style="left:1929px;top:127px;width:23px;height:1048px;background:#efefef;border-right:1px solid #fafafa"></div>
<div class="a" style="left:1935.5px;top:368px;width:10px;height:773px;background:#8d8d8d"></div>

<div id="rsb" class="a"></div>
<div class="hl" style="left:0;top:1224px;width:2007px;height:1px"></div>
<div id="status" class="a"></div>
<div class="a" style="left:1952px;top:79px;width:4px;height:1145px;background:#2a2a2a"></div>
<div class="a" style="left:1956px;top:85px;width:40px;height:2px;background-image:linear-gradient(90deg,#9a9a9a 50%,transparent 50%);background-size:4px 2px"></div>
<svg style="left:1962px;top:101px" width="26" height="26" viewBox="0 0 26 26" fill="none" stroke="#fff" stroke-width="1.8"><path d="M1 25L25 1"/></svg>
<svg style="left:1962px;top:149px" width="26" height="27" viewBox="0 0 26 27" fill="none" stroke="#fff" stroke-width="1.8"><path d="M1 26L21 6"/><path d="M25 1L22 12L14 4Z" fill="#fff" stroke="none"/></svg>
<svg style="left:1962px;top:198px" width="27" height="27" viewBox="0 0 27 27" fill="none" stroke="#fff" stroke-width="1.8"><path d="M1.5 26C2 13 12 3 26 1.5"/></svg>
<svg style="left:1962px;top:246px" width="26" height="28" viewBox="0 0 26 28" fill="none" stroke="#fff" stroke-width="1.8"><path d="M1 27L7 13L14 20L18 7L25 3"/></svg>
<svg style="left:1962px;top:300px" width="27" height="15" viewBox="0 0 27 15" fill="none" stroke="#fff" stroke-width="1.7"><path d="M1 7.5H26M3 1V14M24 1V14M1 10L5 5M22 10L26 5"/></svg>
<svg style="left:1962px;top:346px" width="27" height="22" viewBox="0 0 27 22" fill="none" stroke="#fff" stroke-width="1.8"><rect x="1" y="1" width="25" height="20"/></svg>
<svg style="left:1962px;top:393px" width="27" height="23" viewBox="0 0 27 23" fill="none" stroke="#fff" stroke-width="1.8"><ellipse cx="13.5" cy="11.5" rx="12.5" ry="10.5"/></svg>
<svg style="left:1962px;top:440px" width="27" height="27" viewBox="0 0 27 27" fill="none" stroke="#fff" stroke-width="1.8"><path d="M1 1H25L16 13L25 26H1Z"/></svg>
<svg style="left:1960px;top:487px" width="30" height="30" viewBox="0 0 30 30" fill="none" stroke="#fff" stroke-width="1.8"><path d="M2 28V2H28" stroke="#7b5fc4" stroke-width="2"/><path d="M6 0V4M10 0V4M14 0V4M18 0V4M22 0V4M26 0V4M0 6H4M0 10H4M0 14H4M0 18H4M0 22H4M0 26H4" stroke="#7b5fc4" stroke-width="1.1"/><path d="M10 16L20 8H27V27H10Z" stroke-width="1.6"/><rect x="8" y="14" width="5" height="5" fill="#fff" stroke="none"/><rect x="18" y="6" width="5" height="5" fill="#fff" stroke="none"/><rect x="25" y="6" width="4" height="5" fill="#fff" stroke="none"/><rect x="8" y="24" width="5" height="5" fill="#fff" stroke="none"/><rect x="25" y="24" width="4" height="5" fill="#fff" stroke="none"/></svg>
<svg style="left:1960px;top:535px" width="30" height="30" viewBox="0 0 30 30" fill="none" stroke="#fff" stroke-width="1.8"><path d="M2 28V2H28" stroke="#7b5fc4" stroke-width="2"/><path d="M6 0V4M10 0V4M14 0V4M18 0V4M22 0V4M26 0V4M0 6H4M0 10H4M0 14H4M0 18H4M0 22H4M0 26H4" stroke="#7b5fc4" stroke-width="1.1"/><path d="M9 27V17L17 8H28V27Z" stroke-width="1.8"/></svg>
<svg style="left:1960px;top:583px" width="30" height="30" viewBox="0 0 30 30" fill="none" stroke="#fff" stroke-width="1.8"><path d="M2 28V2H28" stroke="#7b5fc4" stroke-width="2"/><path d="M6 0V4M10 0V4M14 0V4M18 0V4M22 0V4M26 0V4M0 6H4M0 10H4M0 14H4M0 18H4M0 22H4M0 26H4" stroke="#7b5fc4" stroke-width="1.1"/><path d="M10 11V26M27 11V26M11 18.5H26M11 18.5L15 15.5M11 18.5L15 21.5M26 18.5L22 15.5M26 18.5L22 21.5" stroke-width="1.8"/></svg>
<svg style="left:1960px;top:631px" width="30" height="30" viewBox="0 0 30 30" fill="none" stroke="#fff" stroke-width="1.8"><path d="M2 28V2H28" stroke="#7b5fc4" stroke-width="2"/><path d="M6 0V4M10 0V4M14 0V4M18 0V4M22 0V4M26 0V4M0 6H4M0 10H4M0 14H4M0 18H4M0 22H4M0 26H4" stroke="#7b5fc4" stroke-width="1.1"/><path d="M11 11V27M15 10V27M19 10V27M23 10V27M7 22L28 14" stroke-width="1.9"/></svg>
<div class="a" style="left:1956px;top:675px;width:46px;height:2px;background-image:linear-gradient(90deg,#9a9a9a 50%,transparent 50%);background-size:4px 2px"></div>
<svg style="left:1966px;top:692px" width="27" height="27" viewBox="0 0 27 27" fill="none" stroke="#fff" stroke-width="1.8"><rect x="1" y="1" width="25" height="25"/><path d="M8 20L13.5 6L19 20M10 15.5H17" stroke-width="1.6"/></svg>
<svg style="left:1963px;top:739px" width="30" height="28" viewBox="0 0 30 28" fill="none" stroke="#fff" stroke-width="1.8"><path d="M1 26H17L11 17Z"/><path d="M11 17L18 7L27 13L20 24Z M18 7L22 1M27 13L29 11" stroke="#c8a838"/></svg>
<svg style="left:1963px;top:788px" width="30" height="28" viewBox="0 0 30 28" fill="none" stroke="#fff" stroke-width="1.8"><path d="M1 26L7 20L11 24Z" fill="#fff"/><path d="M7 20L20 7L25 12L11 24Z M20 7L27 1M25 12L29 10" stroke="#2a8ad8" stroke-width="2"/><path d="M8 21L20 9L23 12L11 23Z" fill="#2a8ad8" stroke="none"/></svg>
<svg style="left:1964px;top:837px" width="29" height="26" viewBox="0 0 29 26" fill="none" stroke="#fff" stroke-width="1.8"><rect x="1" y="1" width="21" height="12"/><path d="M22 13L28 18L22 23"/><path d="M1 23C3 19 5 19 6 23C7 19 10 19 11 23C12 19 15 19 16 23C17 19 20 19 21 23" stroke-width="1.5"/></svg>
<svg style="left:1965px;top:885px" width="27" height="27" viewBox="0 0 27 27" fill="none" stroke="#fff" stroke-width="1.8"><path d="M13.5 3C16 -1 21 1 20.5 5C25 4 27 9 23.5 12C27 15 25 21 21 20C21 25 16 27 13.5 23C11 27 5 25 6 20C1 21 -1 15 3.5 13C0 9 2 4 6.5 5C6 1 11 -1 13.5 3Z"/></svg>
<svg style="left:1964px;top:934px" width="29" height="28" viewBox="0 0 29 28" fill="none" stroke="#fff" stroke-width="1.8"><rect x="1" y="1" width="22" height="12"/><path d="M23 13L27 17L17 26M17 26L17.5 20M17 26L23 25.5"/></svg>
<svg style="left:1963px;top:982px" width="28" height="27" viewBox="0 0 28 27" fill="none" stroke="#fff" stroke-width="1.8"><path d="M9 14V10C5 8 7 1 13.5 1S22 8 18 10V14M2 14H25V21H2ZM2 25H25"/></svg>
<svg style="left:1992px;top:992px" width="11" height="7" viewBox="0 0 11 7" fill="none" stroke="#fff" stroke-width="1.7"><path d="M1 1L5.5 5.5L10 1"/></svg>
<svg style="left:1966px;top:1031px" width="27" height="26" viewBox="0 0 27 26" fill="none" stroke="#fff" stroke-width="1.8"><rect x="1" y="1" width="25" height="24"/><path d="M1 21L9 12L15 18L19 14L26 21"/><circle cx="18" cy="7" r="2.2"/></svg>
<svg style="left:1963px;top:1079px" width="30" height="27" viewBox="0 0 30 27" fill="none" stroke="#fff" stroke-width="1.8"><path d="M1 6H12M6 1V12" stroke-width="1.8"/><path d="M10 6H29V26H9V10" stroke-dasharray="3.5 2.5" stroke-width="1.8"/></svg>
<svg style="left:621px;top:1187px" width="24" height="24" viewBox="0 0 24 24" fill="none" stroke="#7a7a7a" stroke-width="1.6"><rect x="1" y="1" width="22" height="22"/><path d="M1 5H23"/></svg>
<svg style="left:669px;top:1187px" width="24" height="24" viewBox="0 0 24 24" fill="none" stroke="#fff" stroke-width="2"><rect x="1" y="1" width="22" height="22"/><path d="M12 1V23M1 5H23"/></svg>
<svg style="left:717px;top:1187px" width="24" height="24" viewBox="0 0 24 24" fill="none" stroke="#fff" stroke-width="2"><rect x="1" y="1" width="22" height="22"/><path d="M1 12H23M1 5H23"/></svg>
<div class="a" style="left:757px;top:1188px;width:1.5px;height:22px;background:#777"></div>
<svg style="left:773px;top:1187px" width="21" height="24" viewBox="0 0 21 24" fill="none" stroke="#fff" stroke-width="1.7"><path d="M1 1H13L20 8V23H1Z M13 1V8H20"/><path d="M10.5 8V20M4.5 14H16.5M8.5 10L10.5 8L12.5 10M8.5 18L10.5 20L12.5 18M6.5 12L4.5 14L6.5 16M14.5 12L16.5 14L14.5 16" stroke-width="1.5"/></svg>
<svg style="left:821px;top:1186px" width="23" height="26" viewBox="0 0 23 26" fill="none" stroke="#fff" stroke-width="1.8"><path d="M1 1V5M22 1V5M1 3H22M1 9V25H22V13L18 9Z" stroke-width="1.7"/><path d="M4 21H19M4 21L7 18.5M4 21L7 23.5M19 21L16 18.5M19 21L16 23.5" stroke-width="1.5"/></svg>
<div class="a" style="left:858px;top:1175px;width:49px;height:48px;background:#1c5a8d"></div>
<svg style="left:870px;top:1186px" width="24" height="27" viewBox="0 0 24 27" fill="none" stroke="#fff" stroke-width="1.9"><path d="M9.5 23.5L2 14.5Q0.8 13 2.2 12Q3.8 11 5 12.3L7.4 15.2L6.2 4Q6 2 7.6 2Q9.2 2 9.5 4L10.3 10.5L10.5 1.8Q10.6 0.6 12 0.6Q13.4 0.6 13.5 2L13.7 10.5L15.2 3.2Q15.6 1.8 16.9 2.2Q18.1 2.7 17.8 4.2L16.6 12.5L19.5 8.6Q20.5 7.6 21.6 8.4Q22.4 9.3 21.6 10.6L17.8 20.5Q16.6 24.5 13 24.5H11.5Q10.2 24.5 9.5 23.5Z"/></svg>
<svg style="left:923px;top:1187px" width="17" height="25" viewBox="0 0 17 25" fill="none" stroke="#fff" stroke-width="1.7"><path d="M1 1V19L6 14L10 23L13 21.5L9 13H16Z"/></svg>
<svg style="left:967px;top:1186px" width="23" height="26" viewBox="0 0 23 26" fill="none" stroke="#fff" stroke-width="1.7"><path d="M2 1H8M5 1V25M2 25H8"/><path d="M10 19L14.5 7L19 19M11.5 15H17.5" stroke-width="1.6"/></svg>
<svg style="left:1014px;top:1186px" width="27" height="27" viewBox="0 0 27 27" fill="none" stroke="#fff" stroke-width="1.8"><circle cx="10.5" cy="10.5" r="9"/><path d="M17 17L26 26M6.5 10.5H14.5M10.5 6V11M7 8.5H14M7 13.5H14" stroke-width="1.7"/></svg>
<svg style="left:1068px;top:1189px" width="15" height="20" viewBox="0 0 15 20" fill="none" stroke="#6e6e6e" stroke-width="1.6"><path d="M1.5 1V19M14 1.5V18.5L4 10Z"/></svg>
<svg style="left:1118px;top:1189px" width="12" height="20" viewBox="0 0 12 20" fill="none" stroke="#6e6e6e" stroke-width="1.6"><path d="M11 1.5V18.5L1.5 10Z"/></svg>
<div class="box" style="left:1150px;top:1187px;width:342px;height:26px;border-color:#7a7a7a;border-radius:3px"></div>
<span class="txt" style="left:1255.8px;top:1191.5px;font-size:16px;color:#f0f0f0">Floor Plan (1 of 1)</span>
<svg style="left:1511px;top:1189px" width="12" height="20" viewBox="0 0 12 20" fill="none" stroke="#6e6e6e" stroke-width="1.6"><path d="M1 1.5V18.5L10.5 10Z"/></svg>
<div class="a" style="left:1560.5px;top:1175px;width:15px;height:48px;background:#383838"></div>
<svg style="left:1561px;top:1195px" width="14" height="9" viewBox="0 0 14 9" fill="none" stroke="#fff" stroke-width="2"><path d="M1.5 1.5L7 7L12.5 1.5"/></svg>
<span class="txt" style="left:1618.8px;top:1189.6px;font-size:18.2px;color:#f0f0f0">106.68 x 76.20 cm</span>
<span class="txt" style="left:1796.6px;top:1189.8px;font-size:18px;color:#f0f0f0">9.525 cm = 30'-0"</span>
<span class="txt" style="left:1.7px;top:1240.3px;font-size:16px;color:#f0f0f0">Ready</span>
<svg style="left:1219px;top:1236px" width="25" height="26" viewBox="0 0 25 26" fill="none" stroke="#fff" stroke-width="2.2"><path d="M6 1V25M13 1V25M20 1V25M1 6H24M1 13H24M1 20H24"/></svg>
<svg style="left:1267px;top:1236px" width="26" height="26" viewBox="0 0 26 26" fill="none" stroke="#fff" stroke-width="2.2"><path d="M6 1V25M13 1V18M20 1V10M1 6H24M1 13H14M1 20H10"/><path d="M14 12H19A6.5 6.5 0 0 1 19 25H14V21.5H19A3 3 0 0 0 19 15.5H14Z" stroke-width="1.6"/></svg>
<div class="a" style="left:1304px;top:1225px;width:96px;height:44px;background:#1c5a8d"></div>
<div class="a" style="left:1351.5px;top:1225px;width:1px;height:44px;background:#174d78"></div>
<svg style="left:1317px;top:1235px" width="24" height="28" viewBox="0 0 24 28" fill="none" stroke="#fff" stroke-width="1.7"><path d="M1 1H11L17 7V10M1 1V26H9"/><path d="M11 1V7H17"/><path d="M11 13H16A6.5 6.5 0 0 1 16 26H11V22.5H16A3 3 0 0 0 16 16.5H11Z" stroke-width="1.6"/></svg>
<svg style="left:1364px;top:1235px" width="27" height="28" viewBox="0 0 27 28" fill="none" stroke="#fff" stroke-width="1.7"><path d="M5 20L18 3.5L21 1L26.5 6L24 9L22 7.5M5 20L8.5 23.5L21 9"/><path d="M1.5 24L4.5 21L7.5 24L4.5 27Z" fill="#fff"/><path d="M13 13H18A6.5 6.5 0 0 1 18 26H13V22.5H18A3 3 0 0 0 18 16.5H13Z" stroke-width="1.6"/></svg>
<svg style="left:1412px;top:1235px" width="27" height="28" viewBox="0 0 27 28" fill="none" stroke="#fff" stroke-width="1.7"><path d="M5 20L18 3.5L21 1L26.5 6L24 9L22 7.5M5 20L8.5 23.5L21 9"/><path d="M1.5 24L4.5 21L7.5 24L4.5 27Z" fill="#fff"/></svg>
<svg style="left:1424px;top:1245px" width="17" height="18" viewBox="0 0 17 18" fill="none" stroke="#fff" stroke-width="1.8"><path d="M13.5 6.5A6 6 0 1 0 14.5 10.5" stroke="#2a8ad8" stroke-width="2.2"/><path d="M10.5 6.5L16 2.5L15.5 8.5Z" fill="#2a8ad8" stroke="none"/></svg>
<svg style="left:1460px;top:1236px" width="26" height="26" viewBox="0 0 26 26" fill="none" stroke="#fff" stroke-width="1.8"><rect x="1" y="1" width="24" height="24"/><path d="M1 5H25M5 11H21M21 11L17 8M5 17H21M5 17L9 20" stroke-width="1.6"/></svg>
<svg style="left:1502px;top:1244px" width="12" height="8" viewBox="0 0 12 8" fill="none" stroke="#fff" stroke-width="2"><path d="M1 1L6 6L11 1"/></svg>
<span class="txt" style="left:1546.6px;top:1240.7px;font-size:16.2px;color:#f0f0f0">9.525 cm = 30'-0"</span>
<span class="txt" style="left:1704.4px;top:1240.5px;font-size:16.4px;color:#f0f0f0">106.68 x 76.20 cm</span>
<span class="txt" style="left:1884px;top:1240.3px;font-size:16.6px;color:#f0f0f0">(11.96, 16.26)</span>
<svg style="left:1525px;top:0px" width="50" height="28" viewBox="0 0 50 28"><circle cx="24.2" cy="14" r="15.6" fill="#fff"/><path d="M11.5 17L12 28H0V17Z" fill="#000"/><path d="M18.5 -0.5Q11.5 7 11 17L11.8 28M15 17.8Q24 15.5 31 12Q36.5 8 34 3.5Q32.5 0.5 29 -1M15.8 17.5L26.5 29" fill="none" stroke="#000" stroke-width="2.6"/></svg>
<span class="txt" style="left:1578px;top:5.3px;font-size:16px;font-weight:bold;color:#f4f4f4;letter-spacing:-0.06px">taimoor@brightergraphics.com</span>
<div class="a" style="left:1840px;top:12.5px;width:22px;height:2px;background:#fff"></div>
<svg style="left:1903px;top:3px" width="23" height="22" viewBox="0 0 23 22" fill="none" stroke="#fff" stroke-width="1.8"><rect x="1" y="6" width="15" height="15"/><path d="M6 6V1H22V16H16"/></svg>
<svg style="left:1966px;top:3px" width="23" height="22" viewBox="0 0 23 22" fill="none" stroke="#fff" stroke-width="2"><path d="M1 1L22 21M22 1L1 21"/></svg>
</body></html>
